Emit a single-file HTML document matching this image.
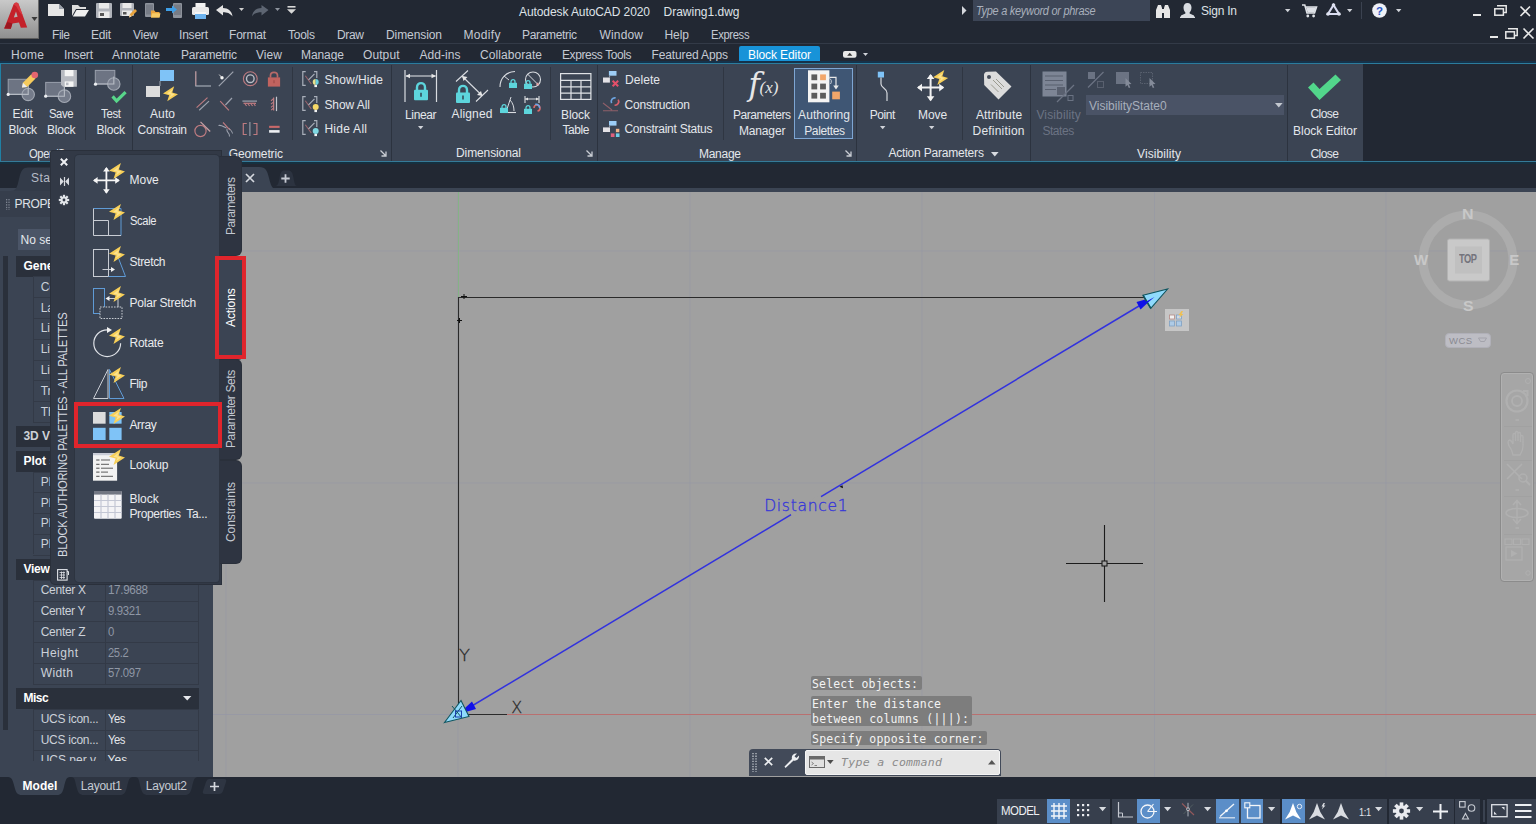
<!DOCTYPE html>
<html lang="en"><head><meta charset="utf-8"><title>Autodesk AutoCAD 2020 - Drawing1.dwg</title>
<style>
html,body{margin:0;padding:0;}
body{width:1536px;height:824px;overflow:hidden;background:#222833;font-family:"Liberation Sans",sans-serif;position:relative;}
#app{position:absolute;left:0;top:0;width:1536px;height:824px;overflow:hidden;}
#app div,#app svg,#app span.t{position:absolute;}
#app div{box-sizing:border-box;}
span.t{white-space:pre;display:block;}
svg{overflow:visible;}
</style></head><body><div id="app">
<div style="left:0px;top:0px;width:39px;height:39px;background:linear-gradient(180deg,#c9c9c9 0%,#a9a9a9 55%,#8f8f8f 100%);border-right:1px solid #6a6a6a;border-bottom:1px solid #5d5d5d;"></div>
<svg style="left:2px;top:1px;" width="30" height="30" viewBox="0 0 30 30">
      <path d="M2.2 27.6 L11.6 3.2 Q13.6 0.2 16.4 2.4 L25.2 26.4 L18.8 26.8 L17 21.4 L10.4 22.6 L8.8 27.8 Z" fill="#c4212a"/>
      <path d="M11.8 16.6 L15.6 15.8 L14 10.4 Z" fill="#b5b5b5"/>
      <path d="M11.6 3.2 Q13.6 0.2 16.4 2.4 L21 15 L17.5 11 L14.2 5.2 Z" fill="#e0424a" opacity=".75"/>
      <path d="M2.2 27.6 L8.8 27.8 L10.4 22.6 L5.4 21 Z" fill="#9a1620"/>
    </svg>
<svg style="left:31px;top:16px;" width="8" height="6" viewBox="0 0 8 6"><path d="M0.5 1 L6.5 1 L3.5 5 Z" fill="#3a3a3a"/></svg>
<svg style="left:48px;top:4px;" width="17" height="13" viewBox="0 0 17 13"><path d="M0 0 H11 L16 5 V12 H0 Z" fill="#e6e6e6"/><path d="M11 0 V5 H16 Z" fill="#9aa0aa"/></svg>
<svg style="left:72px;top:4px;" width="17" height="13" viewBox="0 0 17 13"><path d="M0 1 H6 L8 3 H14 V5 H4 L0 12 Z" fill="#dcdcdc"/><path d="M4.5 6 H17 L13 12.5 H0.8 Z" fill="#f0f0f0"/></svg>
<svg style="left:96px;top:3px;" width="16" height="15" viewBox="0 0 16 15"><rect x="0" y="0" width="16" height="15" rx="1" fill="#b0b3ba"/><rect x="3" y="0" width="10" height="5.5" fill="#e9e9e9"/><rect x="2.5" y="8.5" width="11" height="6.5" fill="#e9e9e9"/><rect x="4" y="10" width="4" height="3" fill="#555"/></svg>
<svg style="left:120px;top:3px;" width="17" height="15" viewBox="0 0 17 15"><rect x="0" y="0" width="14" height="13" rx="1" fill="#b0b3ba"/><rect x="2.5" y="0" width="9" height="5" fill="#e9e9e9"/><rect x="2" y="7.5" width="10" height="5.5" fill="#e9e9e9"/><rect x="3" y="9" width="3.5" height="2.5" fill="#555"/><path d="M9 14.5 L10 11 L15 6 L17 8 L12 13 Z" fill="#e8a33d"/><path d="M9 14.5 L10 11.8 L11.6 13.4 Z" fill="#f3d9b0"/></svg>
<svg style="left:144px;top:3px;" width="17" height="16" viewBox="0 0 17 16"><rect x="1" y="0" width="9" height="14" rx="1" fill="#8d929b"/><rect x="2" y="1.5" width="7" height="10" fill="#777c86"/><path d="M7 7.5 H10.5 L11.5 9 H15.5 V14.5 H7 Z" fill="#e8a33d"/><path d="M8.2 10.2 H16.5 L15.5 14.5 H7 Z" fill="#f7cb66"/></svg>
<svg style="left:166px;top:3px;" width="17" height="16" viewBox="0 0 17 16"><rect x="7" y="0" width="9" height="15" rx="1" fill="#8d929b"/><rect x="8" y="1.5" width="7" height="10.5" fill="#777c86"/><path d="M0 5 H6 V2.5 L11 6.5 L6 10.5 V8 H0 Z" fill="#3fa0e8"/></svg>
<svg style="left:192px;top:3px;" width="17" height="16" viewBox="0 0 17 16"><rect x="3.5" y="0" width="10" height="5" fill="#f2f2f2"/><rect x="0" y="4" width="17" height="8" rx="1.5" fill="#e9e9e9"/><rect x="3" y="9" width="11" height="7" fill="#6db3ee"/><rect x="3" y="9" width="11" height="2" fill="#f6f6f6"/></svg>
<svg style="left:216px;top:5px;" width="17" height="12" viewBox="0 0 17 12"><path d="M0 5 L7 0 V3 C12 3 16 6 16.5 11.5 C14 8 11 7.2 7 7.2 V10.5 Z" fill="#e4e4e4"/></svg>
<svg style="left:239px;top:8px;" width="6" height="4" viewBox="0 0 6 4"><path d="M0 0 H5 L2.5 3 Z" fill="#d0d0d0"/></svg>
<svg style="left:252px;top:5px;" width="17" height="12" viewBox="0 0 17 12"><path d="M16.5 5 L9.5 0 V3 C4.5 3 0.5 6 0 11.5 C2.5 8 5.5 7.2 9.5 7.2 V10.5 Z" fill="#5d6572"/></svg>
<svg style="left:275px;top:8px;" width="6" height="4" viewBox="0 0 6 4"><path d="M0 0 H5 L2.5 3 Z" fill="#8e949e"/></svg>
<svg style="left:287px;top:6px;" width="10" height="8" viewBox="0 0 10 8"><rect x="0.5" y="0" width="8" height="1.6" fill="#d8d8d8"/><path d="M0 3.2 H9 L4.5 7.8 Z" fill="#d8d8d8"/></svg>
<span id="t1" class="t" style="left:519.00px;top:5.00px;line-height:15px;font-size:12px;color:#dfe2e7;letter-spacing:-0.088px;">Autodesk AutoCAD 2020</span>
<span id="t2" class="t" style="left:663.50px;top:5.00px;line-height:15px;font-size:12px;color:#dfe2e7;letter-spacing:-0.004px;">Drawing1.dwg</span>
<svg style="left:962px;top:6px;" width="5" height="9" viewBox="0 0 5 9"><path d="M0 0 L4.5 4.5 L0 9 Z" fill="#d4d7dc"/></svg>
<div style="left:973px;top:0px;width:177px;height:21px;background:#3c4556;"></div>
<span id="t3" class="t" style="left:976.00px;top:3.50px;line-height:15px;font-size:12px;color:#a9b0bc;font-style:italic;transform:scaleX(0.9126);transform-origin:0 50%;letter-spacing:-0.300px;">Type a keyword or phrase</span>
<svg style="left:1155px;top:4px;" width="16" height="14" viewBox="0 0 16 14"><path d="M1 14 V6 L3 1 H6 L7 4 V14 Z M9 14 V4 L10 1 H13 L15 6 V14 Z" fill="#e6e6e6"/><rect x="6.5" y="5" width="3" height="4" fill="#e6e6e6"/></svg>
<svg style="left:1180px;top:3px;" width="15" height="15" viewBox="0 0 15 15"><path d="M7.5 0 C10 0 11.5 2 11.5 4.5 C11.5 7 10.3 9 9.6 9.5 V10.5 L14 12.5 V14.5 H1 V12.5 L5.4 10.5 V9.5 C4.7 9 3.5 7 3.5 4.5 C3.5 2 5 0 7.5 0 Z" fill="#d9dce1"/><rect x="0" y="13.6" width="15" height="1.4" fill="#d9dce1"/></svg>
<span id="t4" class="t" style="left:1201.00px;top:4.00px;line-height:15px;font-size:12px;color:#dfe2e7;letter-spacing:-0.227px;">Sign In</span>
<svg style="left:1285px;top:9px;" width="6" height="4" viewBox="0 0 6 4"><path d="M0 0 H5.4 L2.7 3.2 Z" fill="#d0d3d9"/></svg>
<svg style="left:1302px;top:4px;" width="15" height="14" viewBox="0 0 15 14"><path d="M0 1 H2.8 L5 9 H12.5 L14.5 3 H4" fill="none" stroke="#dfe2e7" stroke-width="1.6"/><path d="M4.2 3.4 H14 L12.3 8.4 H5.6 Z" fill="#dfe2e7"/><circle cx="5.8" cy="12" r="1.4" fill="#dfe2e7"/><circle cx="11.6" cy="12" r="1.4" fill="#dfe2e7"/></svg>
<svg style="left:1326px;top:3px;" width="15" height="13" viewBox="0 0 15 13"><path d="M7.5 2 L13 11 H2 Z" fill="none" stroke="#d9dcf0" stroke-width="2.1"/><circle cx="7.5" cy="2" r="1.8" fill="#dfe2f0"/><circle cx="2" cy="11" r="1.8" fill="#dfe2f0"/><circle cx="13" cy="11" r="1.8" fill="#dfe2f0"/></svg>
<svg style="left:1346.5px;top:9px;" width="6" height="4" viewBox="0 0 6 4"><path d="M0 0 H5.4 L2.7 3.2 Z" fill="#d0d3d9"/></svg>
<div style="left:1361px;top:2px;width:1px;height:17px;background:#3b4250;"></div>
<svg style="left:1372px;top:3px;" width="15" height="15" viewBox="0 0 15 15"><circle cx="7.5" cy="7.5" r="7.3" fill="#eef0f6"/><text x="7.5" y="11.6" font-size="11.5" font-weight="700" text-anchor="middle" fill="#2a56c6" font-family='"Liberation Sans",sans-serif'>?</text></svg>
<svg style="left:1395.5px;top:9px;" width="6" height="4" viewBox="0 0 6 4"><path d="M0 0 H5.4 L2.7 3.2 Z" fill="#d0d3d9"/></svg>
<div style="left:1472.5px;top:14px;width:8px;height:2px;background:#e8e8e8;"></div>
<svg style="left:1494px;top:5px;" width="13" height="11" viewBox="0 0 13 11"><path d="M3 0.8 H12.2 V7.5 H9.5" fill="none" stroke="#e8e8e8" stroke-width="1.5"/><rect x="0.8" y="3.8" width="8.6" height="6.4" fill="none" stroke="#e8e8e8" stroke-width="1.5"/></svg>
<svg style="left:1520px;top:5.5px;" width="11" height="11" viewBox="0 0 11 11"><path d="M0.5 0.5 L10 10 M10 0.5 L0.5 10" stroke="#e8e8e8" stroke-width="1.6" fill="none"/></svg>
<div style="left:1489.5px;top:36px;width:8.5px;height:2px;background:#e8e8e8;"></div>
<svg style="left:1504.5px;top:27.5px;" width="13" height="11" viewBox="0 0 13 11"><path d="M3 0.8 H12.2 V7.5 H9.5" fill="none" stroke="#e8e8e8" stroke-width="1.5"/><rect x="0.8" y="3.8" width="8.6" height="6.4" fill="none" stroke="#e8e8e8" stroke-width="1.5"/></svg>
<svg style="left:1523px;top:27.5px;" width="11" height="11" viewBox="0 0 11 11"><path d="M0.5 0.5 L10.5 10.5 M10.5 0.5 L0.5 10.5" stroke="#e8e8e8" stroke-width="1.6" fill="none"/></svg>
<span id="t5" class="t" style="left:52.00px;top:27.50px;line-height:15px;font-size:12px;color:#c5cad3;letter-spacing:-0.448px;">File</span>
<span id="t6" class="t" style="left:91.00px;top:27.50px;line-height:15px;font-size:12px;color:#c5cad3;letter-spacing:-0.229px;">Edit</span>
<span id="t7" class="t" style="left:133.00px;top:27.50px;line-height:15px;font-size:12px;color:#c5cad3;letter-spacing:-0.266px;">View</span>
<span id="t8" class="t" style="left:179.00px;top:27.50px;line-height:15px;font-size:12px;color:#c5cad3;letter-spacing:-0.203px;">Insert</span>
<span id="t9" class="t" style="left:229.00px;top:27.50px;line-height:15px;font-size:12px;color:#c5cad3;letter-spacing:-0.203px;">Format</span>
<span id="t10" class="t" style="left:288.00px;top:27.50px;line-height:15px;font-size:12px;color:#c5cad3;letter-spacing:-0.254px;">Tools</span>
<span id="t11" class="t" style="left:337.00px;top:27.50px;line-height:15px;font-size:12px;color:#c5cad3;letter-spacing:-0.339px;">Draw</span>
<span id="t12" class="t" style="left:386.00px;top:27.50px;line-height:15px;font-size:12px;color:#c5cad3;letter-spacing:-0.088px;">Dimension</span>
<span id="t13" class="t" style="left:463.50px;top:27.50px;line-height:15px;font-size:12px;color:#c5cad3;letter-spacing:0.331px;">Modify</span>
<span id="t14" class="t" style="left:522.00px;top:27.50px;line-height:15px;font-size:12px;color:#c5cad3;letter-spacing:-0.335px;">Parametric</span>
<span id="t15" class="t" style="left:599.50px;top:27.50px;line-height:15px;font-size:12px;color:#c5cad3;letter-spacing:0.163px;">Window</span>
<span id="t16" class="t" style="left:664.50px;top:27.50px;line-height:15px;font-size:12px;color:#c5cad3;letter-spacing:-0.062px;">Help</span>
<span id="t17" class="t" style="left:711.00px;top:27.50px;line-height:15px;font-size:12px;color:#c5cad3;transform:scaleX(0.9347);transform-origin:0 50%;letter-spacing:-0.361px;">Express</span>
<div style="left:0px;top:43px;width:1536px;height:1px;background:#333a47;"></div>
<span id="t18" class="t" style="left:11.00px;top:48.00px;line-height:15px;font-size:12px;color:#c5cad3;letter-spacing:0.328px;">Home</span>
<span id="t19" class="t" style="left:64.00px;top:48.00px;line-height:15px;font-size:12px;color:#c5cad3;letter-spacing:-0.203px;">Insert</span>
<span id="t20" class="t" style="left:112.00px;top:48.00px;line-height:15px;font-size:12px;color:#c5cad3;letter-spacing:-0.007px;">Annotate</span>
<span id="t21" class="t" style="left:181.00px;top:48.00px;line-height:15px;font-size:12px;color:#c5cad3;letter-spacing:-0.224px;">Parametric</span>
<span id="t22" class="t" style="left:256.00px;top:48.00px;line-height:15px;font-size:12px;color:#c5cad3;letter-spacing:0.068px;">View</span>
<span id="t23" class="t" style="left:301.00px;top:48.00px;line-height:15px;font-size:12px;color:#c5cad3;letter-spacing:-0.075px;">Manage</span>
<span id="t24" class="t" style="left:363.00px;top:48.00px;line-height:15px;font-size:12px;color:#c5cad3;letter-spacing:0.094px;">Output</span>
<span id="t25" class="t" style="left:419.50px;top:48.00px;line-height:15px;font-size:12px;color:#c5cad3;letter-spacing:0.052px;">Add-ins</span>
<span id="t26" class="t" style="left:480.00px;top:48.00px;line-height:15px;font-size:12px;color:#c5cad3;letter-spacing:0.062px;">Collaborate</span>
<span id="t27" class="t" style="left:562.00px;top:48.00px;line-height:15px;font-size:12px;color:#c5cad3;letter-spacing:-0.415px;">Express Tools</span>
<span id="t28" class="t" style="left:651.50px;top:48.00px;line-height:15px;font-size:12px;color:#c5cad3;letter-spacing:-0.130px;">Featured Apps</span>
<div style="left:738.5px;top:46px;width:81.5px;height:18px;background:#1893d8;border-radius:2px 2px 0 0;"></div>
<span id="t29" class="t" style="left:748.00px;top:48.00px;line-height:15px;font-size:12px;color:#ffffff;letter-spacing:-0.094px;">Block Editor</span>
<svg style="left:843px;top:51px;" width="14" height="7" viewBox="0 0 14 7"><rect x="0" y="0" width="13.5" height="6.8" rx="2" fill="#e9e9e9"/><path d="M4.2 4.8 L6.75 1.8 L9.3 4.8 Z" fill="#333"/></svg>
<svg style="left:862.5px;top:53px;" width="6" height="4" viewBox="0 0 6 4"><path d="M0 0 H5 L2.5 3 Z" fill="#d0d3d9"/></svg>
<div style="left:0px;top:64px;width:1362.5px;height:98px;background:#3b4453;"></div>
<div style="left:0px;top:61.4px;width:1536px;height:1.6px;background:#15324a;"></div>
<div style="left:0px;top:63px;width:1536px;height:1px;background:#2b7c9d;"></div>
<div style="left:0px;top:161px;width:1536px;height:1.3px;background:#357a98;"></div>
<div style="left:0px;top:162.3px;width:1536px;height:1.9px;background:#15303f;"></div>
<div style="left:0px;top:64px;width:1.2px;height:97px;background:#2080a4;"></div>
<div style="left:132.0px;top:65px;width:1px;height:96px;background:#2c333f;"></div>
<div style="left:390.8px;top:65px;width:1px;height:96px;background:#2c333f;"></div>
<div style="left:596.5px;top:65px;width:1px;height:96px;background:#2c333f;"></div>
<div style="left:856.1px;top:65px;width:1px;height:96px;background:#2c333f;"></div>
<div style="left:1030.1px;top:65px;width:1px;height:96px;background:#2c333f;"></div>
<div style="left:1287.0px;top:65px;width:1px;height:96px;background:#2c333f;"></div>
<div style="left:85.2px;top:67px;width:1px;height:73px;background:#2f3642;"></div>
<div style="left:292.0px;top:67px;width:1px;height:73px;background:#2f3642;"></div>
<div style="left:549.5px;top:67px;width:1px;height:73px;background:#2f3642;"></div>
<div style="left:722.7px;top:67px;width:1px;height:73px;background:#2f3642;"></div>
<div style="left:962.3px;top:67px;width:1px;height:73px;background:#2f3642;"></div>
<svg style="left:0px;top:60px;" width="48" height="48" viewBox="0 0 48 48">
      <rect x="8.2" y="19.3" width="20.3" height="15.1" fill="#6d7483" stroke="#9aa0ac" stroke-width="1"/>
      <circle cx="28.2" cy="34.4" r="6.2" fill="#7b8290" fill-opacity=".9" stroke="#a2a8b3" stroke-width="1.1"/>
      <path d="M8.2 34.4 H28.2 V27.5" fill="none" stroke="#b5bac3" stroke-width="1.1"/>
      <circle cx="8.2" cy="34.4" r="1.6" fill="#eef0f3"/>
      <path d="M22 27.6 L22.9 22.7 L31.3 14.3 L35.6 18.6 L27.2 27 Z" fill="#f6cb5c"/>
      <path d="M22 27.6 L22.9 22.7 L27.2 27 Z" fill="#eceef2"/>
      <circle cx="34.8" cy="15" r="3.3" fill="#e4656f"/>
    </svg>
<span id="t30" class="t" style="left:12.45px;top:107.30px;line-height:15px;font-size:12px;color:#e4e7eb;letter-spacing:-0.062px;">Edit</span>
<span id="t31" class="t" style="left:8.45px;top:123.30px;line-height:15px;font-size:12px;color:#e4e7eb;letter-spacing:-0.211px;">Block</span>
<svg style="left:40px;top:60px;" width="48" height="48" viewBox="0 0 48 48">
      <rect x="5.7" y="22.4" width="18.7" height="13.8" fill="#6d7483" stroke="#9aa0ac" stroke-width="1"/>
      <circle cx="24.4" cy="36.2" r="6.3" fill="#7b8290" fill-opacity=".9" stroke="#a2a8b3" stroke-width="1.1"/>
      <path d="M5.7 36.2 H24.4 V27" fill="none" stroke="#b5bac3" stroke-width="1.1"/>
      <circle cx="5.7" cy="36.2" r="1.6" fill="#eef0f3"/>
      <path d="M21 9.9 H36.9 V26.8 H23 L21 24.8 Z" fill="#b7bac1"/>
      <rect x="24.7" y="10" width="8.8" height="6.2" fill="#f4f4f4"/>
      <rect x="24.7" y="21.4" width="8.8" height="5.4" fill="#f4f4f4"/>
      <rect x="26" y="22.6" width="2.5" height="2.6" fill="#b7bac1"/>
    </svg>
<span id="t32" class="t" style="left:48.75px;top:107.30px;line-height:15px;font-size:12px;color:#e4e7eb;transform:scaleX(0.9426);transform-origin:0 50%;letter-spacing:-0.456px;">Save</span>
<span id="t33" class="t" style="left:47.05px;top:123.30px;line-height:15px;font-size:12px;color:#e4e7eb;letter-spacing:-0.211px;">Block</span>
<svg style="left:88px;top:60px;" width="48" height="48" viewBox="0 0 48 48">
      <rect x="7.3" y="10.4" width="19.5" height="13.6" fill="#6d7483" stroke="#9aa0ac" stroke-width="1"/>
      <circle cx="25.8" cy="24" r="6.2" fill="#7b8290" fill-opacity=".9" stroke="#a2a8b3" stroke-width="1.1"/>
      <path d="M7.3 24 H25.8 V16.5" fill="none" stroke="#b5bac3" stroke-width="1.1"/>
      <circle cx="7.5" cy="24.2" r="1.6" fill="#eef0f3"/>
      <path d="M24.6 36.4 L28.6 41 L37.6 32.2" fill="none" stroke="#58d68a" stroke-width="3.2"/>
    </svg>
<span id="t34" class="t" style="left:101.00px;top:107.30px;line-height:15px;font-size:12px;color:#e4e7eb;transform:scaleX(0.9563);transform-origin:0 50%;letter-spacing:-0.367px;">Test</span>
<span id="t35" class="t" style="left:96.55px;top:123.30px;line-height:15px;font-size:12px;color:#e4e7eb;letter-spacing:-0.211px;">Block</span>
<span id="t36" class="t" style="left:29.00px;top:147.00px;line-height:15px;font-size:12px;color:#e4e7eb;transform:scaleX(0.9291);transform-origin:0 50%;letter-spacing:-0.375px;">Open/Save</span>
<svg style="left:88px;top:152px;" width="8" height="5" viewBox="0 0 8 5"><path d="M0 0 H7.6 L3.8 4.4 Z" fill="#d8dbe0"/></svg>
<svg style="left:146px;top:70px;" width="32" height="32" viewBox="0 0 32 32">
      <path d="M14 11 V16" stroke="#9aa1ad" stroke-width="1"/>
      <rect x="14" y="0" width="14" height="11" fill="#7fc3f7"/>
      <rect x="0" y="16" width="14" height="11" fill="#dcdcdc"/>
    </svg>
<svg style="left:163px;top:86px;" width="15" height="15.5" viewBox="0 0 15 15"><path d="M11.2 0 L0 7.3 L6.2 9 L4.2 15 L15 8 L9.2 6.2 Z" fill="#f7cf58"/><path d="M9.6 3 L4 7.3 L8 8.3 L6.6 11.6 L11.6 8 L7.8 6.8 Z" fill="#fbe28f"/></svg>
<span id="t37" class="t" style="left:150.00px;top:107.30px;line-height:15px;font-size:12px;color:#e4e7eb;letter-spacing:0.104px;">Auto</span>
<span id="t38" class="t" style="left:137.55px;top:123.30px;line-height:15px;font-size:12px;color:#e4e7eb;letter-spacing:-0.232px;">Constrain</span>
<svg style="left:194.5px;top:71.2px;" width="16" height="16" viewBox="0 0 16 16"><path d="M0.8 0.3 V15" stroke="#c9a3a8" stroke-width="1.2"/><path d="M0.3 15 H16" stroke="#9ca2ae" stroke-width="1.3"/></svg>
<svg style="left:218px;top:71.2px;" width="16" height="16" viewBox="0 0 16 16"><path d="M0.8 15.2 L15.3 0.7" stroke="#9ca2ae" stroke-width="1.2"/><circle cx="4" cy="6.8" r="1.7" fill="#f4f4f4"/><path d="M1.2 3.6 L3.4 6" stroke="#d8d8d8" stroke-width="1"/></svg>
<svg style="left:242px;top:71.2px;" width="16" height="16" viewBox="0 0 16 16"><circle cx="8.3" cy="7.7" r="6.9" fill="none" stroke="#bd7b80" stroke-width="1.1"/><circle cx="8.3" cy="7.7" r="3.8" fill="none" stroke="#b9bec7" stroke-width="1.4"/></svg>
<svg style="left:266px;top:71.2px;" width="16" height="16" viewBox="0 0 16 16"><path d="M4.5 6.8 V4.6 C4.5 0.2 11.5 0.2 11.5 4.6 V6.8" fill="none" stroke="#b96a68" stroke-width="1.7"/><rect x="1.9" y="6.4" width="12.2" height="9.2" fill="#c1635f"/><rect x="7.2" y="9.2" width="1.6" height="3" fill="#a8524f"/></svg>
<svg style="left:194.5px;top:95.7px;" width="16" height="16" viewBox="0 0 16 16"><path d="M1.6 11.6 L12.5 1.6" stroke="#bd7b80" stroke-width="1.2"/><path d="M4.2 14.3 L14 5.1" stroke="#9ca2ae" stroke-width="1.2"/></svg>
<svg style="left:218px;top:95.7px;" width="16" height="16" viewBox="0 0 16 16"><path d="M2.2 5.1 L10.9 14.3" stroke="#bd7b80" stroke-width="1.2"/><path d="M7.4 9 L14 2" stroke="#9ca2ae" stroke-width="1.2"/></svg>
<svg style="left:242px;top:95.7px;" width="16" height="16" viewBox="0 0 16 16"><path d="M0.4 5.1 H15" stroke="#9ca2ae" stroke-width="1.2"/><path d="M1.5 7.3 H14" stroke="#bd7b80" stroke-width="1.3"/><path d="M3 8 l1.6 2 M6 8 l1.6 2 M9 8 l1.6 2 M12 8 l1.4 1.8" stroke="#bd7b80" stroke-width="1.1"/></svg>
<svg style="left:266px;top:95.7px;" width="16" height="16" viewBox="0 0 16 16"><path d="M10.5 0.7 V15.1" stroke="#c3c7cf" stroke-width="1.2"/><path d="M7.6 1.5 V14.5" stroke="#bd7b80" stroke-width="1.3"/><path d="M7 3 l-2 1.8 M7 6.3 l-2 1.8 M7 9.6 l-2 1.8 M7 12.5 l-1.8 1.6" stroke="#bd7b80" stroke-width="1.1"/></svg>
<svg style="left:194.5px;top:120.5px;" width="16" height="16" viewBox="0 0 16 16"><circle cx="5.5" cy="10" r="5.6" fill="none" stroke="#bd7b80" stroke-width="1.2"/><path d="M5.5 0.8 L15.2 10.5" stroke="#c9a3a8" stroke-width="1.2"/></svg>
<svg style="left:218px;top:120.5px;" width="16" height="16" viewBox="0 0 16 16"><path d="M0.5 4.5 C4 3.5 6 6.5 8.5 7" fill="none" stroke="#9ca2ae" stroke-width="1.2"/><path d="M5 1.5 C8 4 9 7 12.5 9" fill="none" stroke="#bd7b80" stroke-width="1.3"/><path d="M9 8 C8 12 12 11 11.5 15.5" fill="none" stroke="#9ca2ae" stroke-width="1.1"/><path d="M11 7.5 C13 9 14 10.5 14.5 12.5" fill="none" stroke="#9ca2ae" stroke-width="1"/></svg>
<svg style="left:242px;top:120.5px;" width="16" height="16" viewBox="0 0 16 16"><path d="M4.8 2.5 H1.3 V13.5 H4.8 M11.4 2.5 H14.9 V13.5 H11.4" fill="none" stroke="#bd7b80" stroke-width="1.2"/><path d="M7.9 1 V15" stroke="#9ca2ae" stroke-width="1.1"/></svg>
<svg style="left:266px;top:120.5px;" width="16" height="16" viewBox="0 0 16 16"><rect x="3.1" y="4.8" width="10.5" height="2.1" fill="#c9696a"/><rect x="3.1" y="9.1" width="10.5" height="2.6" fill="#eef0f3"/></svg>
<span id="t39" class="t" style="left:228.70px;top:146.70px;line-height:15px;font-size:12px;color:#e4e7eb;letter-spacing:-0.132px;">Geometric</span>
<svg style="left:380px;top:150px;" width="7" height="7" viewBox="0 0 7 7"><path d="M0.5 0.5 L5.5 5.5 M6 1.5 V6 H1.5" fill="none" stroke="#c9cdd4" stroke-width="1.3"/></svg>
<svg style="left:301.5px;top:71px;" width="18" height="18" viewBox="0 0 18 18"><path d="M3.7 0.6 H0.8 V14.4 H3.7" fill="none" stroke="#a9afba" stroke-width="1.2"/><path d="M12 0.6 H14.8 V7" fill="none" stroke="#a9afba" stroke-width="1.2"/><path d="M3.3 4.7 L9.3 13" stroke="#9a646c" stroke-width="1.1"/><path d="M12.5 2.8 L6.5 8.9" stroke="#a9afba" stroke-width="1.2"/><path d="M13.7 7.9 A3 3 0 0 0 13.7 13.9 Z" fill="#e8e08c"/><path d="M13.7 7.9 A3 3 0 0 1 13.7 13.9 Z" fill="#69d0e0"/><rect x="12.4" y="13.9" width="2.6" height="2.2" fill="#f2f2f2"/></svg>
<svg style="left:301.5px;top:95.7px;" width="18" height="18" viewBox="0 0 18 18"><path d="M3.7 0.6 H0.8 V14.4 H3.7" fill="none" stroke="#a9afba" stroke-width="1.2"/><path d="M12 0.6 H14.8 V7" fill="none" stroke="#a9afba" stroke-width="1.2"/><path d="M3.3 4.7 L9.3 13" stroke="#9a646c" stroke-width="1.1"/><path d="M12.5 2.8 L6.5 8.9" stroke="#a9afba" stroke-width="1.2"/><circle cx="13.7" cy="10.9" r="3" fill="#f5d867"/><rect x="12.4" y="13.9" width="2.6" height="2.2" fill="#f2f2f2"/></svg>
<svg style="left:301.5px;top:120.30000000000001px;" width="18" height="18" viewBox="0 0 18 18"><path d="M3.7 0.6 H0.8 V14.4 H3.7" fill="none" stroke="#a9afba" stroke-width="1.2"/><path d="M12 0.6 H14.8 V7" fill="none" stroke="#a9afba" stroke-width="1.2"/><path d="M3.3 4.7 L9.3 13" stroke="#9a646c" stroke-width="1.1"/><path d="M12.5 2.8 L6.5 8.9" stroke="#a9afba" stroke-width="1.2"/><circle cx="13.7" cy="10.9" r="3" fill="#7fd8e2"/><rect x="12.4" y="13.9" width="2.6" height="2.2" fill="#f2f2f2"/></svg>
<span id="t40" class="t" style="left:324.40px;top:73.00px;line-height:15px;font-size:12px;color:#e4e7eb;letter-spacing:0.071px;">Show/Hide</span>
<span id="t41" class="t" style="left:324.40px;top:97.70px;line-height:15px;font-size:12px;color:#e4e7eb;letter-spacing:-0.062px;">Show All</span>
<span id="t42" class="t" style="left:324.40px;top:122.30px;line-height:15px;font-size:12px;color:#e4e7eb;letter-spacing:0.273px;">Hide All</span>
<svg style="left:404px;top:70px;" width="34" height="33" viewBox="0 0 34 33"><path d="M1 0 V32 M32.5 0 V32" stroke="#d9dce1" stroke-width="1.2"/><path d="M2 6 H31.5" stroke="#d9dce1" stroke-width="1.1"/><path d="M1.5 6 L6 3.8 V8.2 Z M32 6 L27.5 3.8 V8.2 Z" fill="#e6e6e6"/></svg>
<svg style="left:413.5px;top:82px;" width="14" height="18.5" viewBox="0 0 14 18"><path d="M3 8 V5 C3 -0.5 11 -0.5 11 5 V8" fill="none" stroke="#5dd5dc" stroke-width="2.4"/><rect x="0" y="7.5" width="14" height="10.5" rx="1" fill="#5dd5dc"/><rect x="6.3" y="10.5" width="1.4" height="4" fill="#2f3744"/></svg>
<span id="t43" class="t" style="left:405.05px;top:108.00px;line-height:15px;font-size:12px;color:#e4e7eb;letter-spacing:-0.372px;">Linear</span>
<svg style="left:418px;top:125.5px;" width="6" height="4" viewBox="0 0 6 4"><path d="M0 0 H5.4 L2.7 3.2 Z" fill="#d0d3d9"/></svg>
<svg style="left:451px;top:69px;" width="40" height="36" viewBox="0 0 40 36"><path d="M5 12.5 L17 1.5 M25 32.5 L37 21" stroke="#d9dce1" stroke-width="1.1"/><path d="M11.5 7.5 L31 26.5" stroke="#d9dce1" stroke-width="1.1"/><path d="M11 7 L16.5 8 L12.5 12 Z M31.5 27 L26 26 L30 22 Z" fill="#e6e6e6"/></svg>
<svg style="left:455.8px;top:84.5px;" width="14" height="18" viewBox="0 0 14 18"><path d="M3 8 V5 C3 -0.5 11 -0.5 11 5 V8" fill="none" stroke="#5dd5dc" stroke-width="2.4"/><rect x="0" y="7.5" width="14" height="10.5" rx="1" fill="#5dd5dc"/><rect x="6.3" y="10.5" width="1.4" height="4" fill="#2f3744"/></svg>
<span id="t44" class="t" style="left:451.60px;top:107.30px;line-height:15px;font-size:12px;color:#e4e7eb;letter-spacing:0.128px;">Aligned</span>
<svg style="left:499px;top:71px;" width="18" height="18" viewBox="0 0 18 18"><path d="M1 16 C1 7 7 1 16 0.5" fill="none" stroke="#d9dce1" stroke-width="1.1"/><path d="M5 5 L10 9" stroke="#d9dce1" stroke-width="1"/></svg>
<svg style="left:508.5px;top:79px;" width="8" height="9" viewBox="0 0 8 9"><path d="M2 4 V2.8 C2 0 6 0 6 2.8 V4" fill="none" stroke="#5dd5dc" stroke-width="1.3"/><rect x="0" y="3.8" width="8" height="5.2" fill="#5dd5dc"/></svg>
<svg style="left:523px;top:71px;" width="18" height="18" viewBox="0 0 18 18"><circle cx="10" cy="8.5" r="7.5" fill="none" stroke="#d9dce1" stroke-width="1.1"/><path d="M4.5 3 L15.5 14" stroke="#d9dce1" stroke-width="1"/><path d="M16 14.5 L12.8 13.6 L15.1 11.3 Z" fill="#e8a0a0"/></svg>
<svg style="left:523.5px;top:79.5px;" width="8" height="9" viewBox="0 0 8 9"><path d="M2 4 V2.8 C2 0 6 0 6 2.8 V4" fill="none" stroke="#5dd5dc" stroke-width="1.3"/><rect x="0" y="3.8" width="8" height="5.2" fill="#5dd5dc"/></svg>
<svg style="left:499px;top:96px;" width="18" height="18" viewBox="0 0 18 18"><path d="M2 16.5 H17" stroke="#d9dce1" stroke-width="1.1"/><path d="M7 16 L12 1" stroke="#d9dce1" stroke-width="1"/><path d="M11 4 C14 7 15 11 15 15" fill="none" stroke="#d9dce1" stroke-width="1"/></svg>
<svg style="left:499.5px;top:104px;" width="8" height="9" viewBox="0 0 8 9"><path d="M2 4 V2.8 C2 0 6 0 6 2.8 V4" fill="none" stroke="#5dd5dc" stroke-width="1.3"/><rect x="0" y="3.8" width="8" height="5.2" fill="#5dd5dc"/></svg>
<svg style="left:523px;top:96px;" width="18" height="18" viewBox="0 0 18 18"><path d="M2 0 V7 M16 0 V7 M2 3 H16" stroke="#d9dce1" stroke-width="1.1" fill="none"/><path d="M2.3 3 L5 1.6 V4.4 Z M15.7 3 L13 1.6 V4.4 Z" fill="#e6e6e6"/><path d="M11 12 A3 3 0 1 1 14.5 15" fill="none" stroke="#d86a6a" stroke-width="1.6"/><path d="M12.2 8.5 A3.2 3.2 0 0 1 16.5 12" fill="none" stroke="#6da6e8" stroke-width="1.6"/></svg>
<svg style="left:523.5px;top:105px;" width="8" height="9" viewBox="0 0 8 9"><path d="M2 4 V2.8 C2 0 6 0 6 2.8 V4" fill="none" stroke="#5dd5dc" stroke-width="1.3"/><rect x="0" y="3.8" width="8" height="5.2" fill="#5dd5dc"/></svg>
<svg style="left:559.5px;top:72.5px;" width="32" height="27" viewBox="0 0 32 27"><rect x="0.6" y="0.6" width="30.3" height="25.8" fill="none" stroke="#dfe2e6" stroke-width="1.2"/><path d="M0.6 7.4 H31 M0.6 13.8 H31 M0.6 20.2 H31 M11 7.4 V26.4 M21 7.4 V26.4" stroke="#dfe2e6" stroke-width="1.2" fill="none"/></svg>
<span id="t45" class="t" style="left:561.00px;top:107.70px;line-height:15px;font-size:12px;color:#e4e7eb;letter-spacing:-0.086px;">Block</span>
<span id="t46" class="t" style="left:562.60px;top:123.30px;line-height:15px;font-size:12px;color:#e4e7eb;letter-spacing:-0.472px;">Table</span>
<span id="t47" class="t" style="left:456.00px;top:146.40px;line-height:15px;font-size:12px;color:#e4e7eb;letter-spacing:-0.103px;">Dimensional</span>
<svg style="left:586px;top:150px;" width="7" height="7" viewBox="0 0 7 7"><path d="M0.5 0.5 L5.5 5.5 M6 1.5 V6 H1.5" fill="none" stroke="#c9cdd4" stroke-width="1.3"/></svg>
<svg style="left:600px;top:68px;" width="24" height="24" viewBox="0 0 24 24"><rect x="8.9" y="3" width="7.6" height="4.7" fill="#9ccdf6"/><rect x="3" y="9.5" width="6.9" height="5.1" fill="#e4e2e6"/><path d="M9.6 7.7 V9.5" stroke="#9aa1ad"/><path d="M12.6 12.7 L18.2 18.3 M18.2 12.7 L12.6 18.3" stroke="#e4506a" stroke-width="2"/></svg>
<span id="t48" class="t" style="left:625.00px;top:73.00px;line-height:15px;font-size:12px;color:#e4e7eb;letter-spacing:0.062px;">Delete</span>
<svg style="left:600px;top:92px;" width="24" height="24" viewBox="0 0 24 24"><path d="M3 11 L12 18 M3 18.8 H18" stroke="#8f5f69" stroke-width="1.1" fill="none"/><path d="M11.6 11.2 A3.7 3.7 0 0 1 15.6 5.9" fill="none" stroke="#6ea4e0" stroke-width="1.7"/><path d="M18.2 7.6 A3.7 3.7 0 0 1 14.6 13.2" fill="none" stroke="#d8606c" stroke-width="1.7"/></svg>
<span id="t49" class="t" style="left:624.40px;top:97.70px;line-height:15px;font-size:12px;color:#e4e7eb;letter-spacing:-0.161px;">Construction</span>
<svg style="left:600px;top:117px;" width="24" height="24" viewBox="0 0 24 24"><rect x="9" y="4" width="7.5" height="4.6" fill="#9ccdf6"/><rect x="3" y="10.4" width="7" height="4.6" fill="#e4e2e6"/><path d="M9.6 8.6 V10.4" stroke="#9aa1ad"/><rect x="15.9" y="11.8" width="3.4" height="3.4" fill="#f0b48a"/><rect x="10.8" y="16.4" width="3.7" height="3.6" fill="#e0607c"/><rect x="15.9" y="16.4" width="3.6" height="3.6" fill="#6ecfe8"/></svg>
<span id="t50" class="t" style="left:624.40px;top:122.30px;line-height:15px;font-size:12px;color:#e4e7eb;letter-spacing:-0.253px;">Constraint Status</span>
<svg style="left:745px;top:68px;" width="36" height="36" viewBox="0 0 36 36"><text x="3.5" y="27" font-size="31" font-style="italic" fill="#e6e6e6" font-family="DejaVu Serif, serif">f</text><text x="14.5" y="24.6" font-size="17" font-style="italic" fill="#e6e6e6" font-family="Liberation Serif, serif">(x)</text></svg>
<span id="t51" class="t" style="left:733.00px;top:108.00px;line-height:15px;font-size:12px;color:#e4e7eb;letter-spacing:-0.448px;">Parameters</span>
<span id="t52" class="t" style="left:738.95px;top:123.80px;line-height:15px;font-size:12px;color:#e4e7eb;letter-spacing:-0.146px;">Manager</span>
<div style="left:794px;top:68px;width:59px;height:71px;background:#3f5674;border:1px solid #7ea6d3;"></div>
<svg style="left:808px;top:70px;" width="33" height="33" viewBox="0 0 33 33">
      <rect x="0" y="0.3" width="21.4" height="32" fill="#f4f4f4"/>
      <rect x="3.4" y="4.4" width="5.8" height="5.8" fill="#5d5d5d"/><rect x="12.1" y="4.4" width="5.8" height="5.8" fill="#f2a66a"/>
      <rect x="3.4" y="13.6" width="5.8" height="5.8" fill="#5d5d5d"/><rect x="12.1" y="13.6" width="5.8" height="5.8" fill="#5d5d5d"/>
      <rect x="3.4" y="22.8" width="5.8" height="5.8" fill="#5d5d5d"/><rect x="12.1" y="22.8" width="5.8" height="5.8" fill="#5d5d5d"/>
      <path d="M21.4 7.3 H28 V16" fill="none" stroke="#e8e8e8" stroke-width="1.2"/><path d="M25.2 15.4 H30.8 L28 19.4 Z" fill="#e8e8e8"/>
      <path d="M21.4 8.5 C23.5 9 24 12 22.5 14" fill="none" stroke="#cfd3da" stroke-width="1"/>
      <rect x="24.2" y="21.6" width="7.7" height="7.7" fill="#f2a66a"/>
    </svg>
<span id="t53" class="t" style="left:798.10px;top:107.70px;line-height:15px;font-size:12px;color:#e4e7eb;letter-spacing:0.053px;">Authoring</span>
<span id="t54" class="t" style="left:804.25px;top:123.50px;line-height:15px;font-size:12px;color:#e4e7eb;letter-spacing:-0.380px;">Palettes</span>
<span id="t55" class="t" style="left:698.90px;top:146.70px;line-height:15px;font-size:12px;color:#e4e7eb;letter-spacing:-0.255px;">Manage</span>
<svg style="left:845px;top:150px;" width="7" height="7" viewBox="0 0 7 7"><path d="M0.5 0.5 L5.5 5.5 M6 1.5 V6 H1.5" fill="none" stroke="#c9cdd4" stroke-width="1.3"/></svg>
<svg style="left:876px;top:71px;" width="14" height="31" viewBox="0 0 14 31"><rect x="1.8" y="0.7" width="6.2" height="5.8" fill="#7fc3f7"/><path d="M5 6.5 V13 C5 17 11 17 11 22 V30" fill="none" stroke="#d6d9de" stroke-width="1.2"/></svg>
<span id="t56" class="t" style="left:869.75px;top:108.00px;line-height:15px;font-size:12px;color:#e4e7eb;letter-spacing:-0.465px;">Point</span>
<svg style="left:879.7px;top:125.5px;" width="6" height="4" viewBox="0 0 6 4"><path d="M0 0 H5.4 L2.7 3.2 Z" fill="#d0d3d9"/></svg>
<svg style="left:916.8px;top:74.4px;" width="27.2" height="27.2" viewBox="0 0 27.2 27.2"><path d="M13.6 1 V26.2 M1 13.6 H26.2" stroke="#f2f2f2" stroke-width="2"/><path d="M13.6 0 L9.8 5 H17.4 Z M13.6 27.2 L9.8 22.2 H17.4 Z M0 13.6 L5 9.8 V17.4 Z M27.2 13.6 L22.2 9.8 V17.4 Z" fill="#f2f2f2"/></svg>
<svg style="left:932.8px;top:70px;" width="15.2" height="15" viewBox="0 0 15 15"><path d="M11.2 0 L0 7.3 L6.2 9 L4.2 15 L15 8 L9.2 6.2 Z" fill="#f7cf58"/><path d="M9.6 3 L4 7.3 L8 8.3 L6.6 11.6 L11.6 8 L7.8 6.8 Z" fill="#fbe28f"/></svg>
<span id="t57" class="t" style="left:918.00px;top:108.00px;line-height:15px;font-size:12px;color:#e4e7eb;letter-spacing:-0.048px;">Move</span>
<svg style="left:929px;top:125.5px;" width="6" height="4" viewBox="0 0 6 4"><path d="M0 0 H5.4 L2.7 3.2 Z" fill="#d0d3d9"/></svg>
<svg style="left:983px;top:71px;" width="29" height="29" viewBox="0 0 29 29"><path d="M1 5 Q0.5 1 4.5 0.8 L13 0.5 L28.5 15.5 L15.5 28.5 L1.2 14 Z" fill="#dcdcdc"/><circle cx="6" cy="6" r="2" fill="#444b58"/><path d="M10 9 L19 18 M8 13.5 L15.5 21 M13 8 L21 16" stroke="#9b9b90" stroke-width="1"/></svg>
<span id="t58" class="t" style="left:975.90px;top:107.70px;line-height:15px;font-size:12px;color:#e4e7eb;letter-spacing:0.187px;">Attribute</span>
<span id="t59" class="t" style="left:972.50px;top:123.50px;line-height:15px;font-size:12px;color:#e4e7eb;letter-spacing:0.219px;">Definition</span>
<span id="t60" class="t" style="left:888.40px;top:146.40px;line-height:15px;font-size:12px;color:#e4e7eb;letter-spacing:-0.201px;">Action Parameters</span>
<svg style="left:991px;top:151.5px;" width="8" height="5" viewBox="0 0 8 5"><path d="M0 0 H7.6 L3.8 4.4 Z" fill="#d8dbe0"/></svg>
<svg style="left:1042px;top:70.5px;" width="34" height="32" viewBox="0 0 34 32"><rect x="0.5" y="0.5" width="24" height="25" fill="#7d8595"/><path d="M3 5 H21 M3 9.5 H21 M3 14 H21 M3 18.5 H14" stroke="#59606f" stroke-width="1.2"/><rect x="15" y="16" width="8" height="8" fill="#59606f"/><path d="M15 31 L32 14" stroke="#6b7383" stroke-width="1.2"/><rect x="26" y="24.5" width="5" height="5" fill="none" stroke="#6b7383" stroke-width="1"/></svg>
<span id="t61" class="t" style="left:1036.40px;top:108.30px;line-height:15px;font-size:12px;color:#6b7383;letter-spacing:0.142px;">Visibility</span>
<span id="t62" class="t" style="left:1042.40px;top:123.80px;line-height:15px;font-size:12px;color:#6b7383;letter-spacing:-0.446px;">States</span>
<svg style="left:1088px;top:72px;" width="16" height="16" viewBox="0 0 16 16"><rect x="0" y="0" width="7" height="7" fill="#6b7383"/><path d="M0 15.5 L15.5 0" stroke="#6b7383" stroke-width="1.2"/><rect x="9.5" y="9.5" width="6" height="6" fill="none" stroke="#59606f" stroke-width="1"/></svg>
<svg style="left:1116px;top:72px;" width="16" height="16" viewBox="0 0 16 16"><rect x="0" y="0" width="13" height="12" fill="#6b7383"/><path d="M9.5 6 L15.5 12 L12.8 12.3 L14.3 15.5 L12.8 16 L11.5 13 L9.5 14.8 Z" fill="#848b99"/></svg>
<svg style="left:1140px;top:72px;" width="16" height="16" viewBox="0 0 16 16"><rect x="0.5" y="0.5" width="12" height="11" fill="none" stroke="#59606f" stroke-width="1" stroke-dasharray="1.5 1"/><path d="M9.5 6 L15.5 12 L12.8 12.3 L14.3 15.5 L12.8 16 L11.5 13 L9.5 14.8 Z" fill="#848b99"/></svg>
<div style="left:1086px;top:95px;width:197.5px;height:19.7px;background:#4a5366;"></div>
<span id="t63" class="t" style="left:1089.00px;top:98.50px;line-height:15px;font-size:12px;color:#a7afbc;letter-spacing:-0.009px;">VisibilityState0</span>
<svg style="left:1275px;top:103px;" width="8" height="5" viewBox="0 0 8 5"><path d="M0 0 H7.6 L3.8 4.4 Z" fill="#c3c8d0"/></svg>
<span id="t64" class="t" style="left:1137.00px;top:146.50px;line-height:15px;font-size:12px;color:#e4e7eb;letter-spacing:0.097px;">Visibility</span>
<svg style="left:1308px;top:73.5px;" width="34" height="26" viewBox="0 0 34 26"><path d="M0 13.5 L5.5 8.5 L11.5 15 L27.5 0.5 L33 6 L11.5 26 Z" fill="#52d68b"/></svg>
<span id="t65" class="t" style="left:1310.40px;top:107.30px;line-height:15px;font-size:12px;color:#e4e7eb;letter-spacing:-0.522px;">Close</span>
<span id="t66" class="t" style="left:1293.00px;top:123.50px;line-height:15px;font-size:12px;color:#e4e7eb;letter-spacing:-0.003px;">Block Editor</span>
<span id="t67" class="t" style="left:1310.40px;top:146.70px;line-height:15px;font-size:12px;color:#e4e7eb;letter-spacing:-0.522px;">Close</span>
<div style="left:0px;top:164px;width:1536px;height:24px;background:#222833;"></div>
<div style="left:0px;top:188px;width:1536px;height:4px;background:#3b4453;"></div>
<svg style="left:10px;top:167px;" width="120" height="24" viewBox="0 0 120 24"><path d="M0 24 C6 24 7 21 9 12 C11 3 13 0.5 18 0.5 H110 V24 Z" fill="#333b49"/></svg>
<span id="t68" class="t" style="left:31.00px;top:170.50px;line-height:15px;font-size:12px;color:#b6bcc7;letter-spacing:0.414px;">Start</span>
<svg style="left:60px;top:167px;" width="212" height="24" viewBox="0 0 212 24"><path d="M0 24 V0 H199 C206 0 207 3.5 209 11 C211 19 212 22 217 22 V24 Z" fill="#3b4453"/></svg>
<svg style="left:245px;top:172.5px;" width="10" height="10" viewBox="0 0 10 10"><path d="M1 1 L9 9 M9 1 L1 9" stroke="#d5d8de" stroke-width="1.7"/></svg>
<svg style="left:273px;top:170px;" width="24" height="16" viewBox="0 0 24 16"><path d="M2 16 C5 16 5.5 13 6.5 8 C7.5 2.5 8.5 0.5 11 0.5 H15 C18.5 0.5 19.5 2.5 20.5 8 C21.5 13 22 16 24 16 Z" fill="#2c3340"/></svg>
<svg style="left:280.7px;top:173.7px;" width="9" height="9" viewBox="0 0 9 9"><path d="M4.5 0.3 V8.7 M0.3 4.5 H8.7" stroke="#c5c9d2" stroke-width="1.8"/></svg>
<div style="left:212.5px;top:192px;width:1323.5px;height:585px;background:#a0a0a0;"></div>
<svg style="left:0;top:0" width="1536" height="824" viewBox="0 0 1536 824"><path d="M226 192 V777" stroke="#9597a6" stroke-width="1" opacity=".55"/><path d="M458 192 V777" stroke="#9597a6" stroke-width="1" opacity=".55"/><path d="M690 192 V777" stroke="#9597a6" stroke-width="1" opacity=".55"/><path d="M922 192 V777" stroke="#9597a6" stroke-width="1" opacity=".55"/><path d="M1154.5 192 V777" stroke="#9597a6" stroke-width="1" opacity=".55"/><path d="M1386 192 V777" stroke="#9597a6" stroke-width="1" opacity=".55"/><path d="M213 251 H1536" stroke="#9597a6" stroke-width="1" opacity=".55"/><path d="M213 483 H1536" stroke="#9597a6" stroke-width="1" opacity=".55"/><path d="M213 714.5 H458" stroke="#9597a6" stroke-width="1" opacity=".7"/><path d="M458 714.5 H1536" stroke="#b97070" stroke-width="1"/><path d="M458.5 192 V297" stroke="#86b386" stroke-width="1"/><path d="M458.5 714 V297.5 H1154" fill="none" stroke="#2a2a2a" stroke-width="1.1"/><path d="M458 714.5 H507" stroke="#2a2a2a" stroke-width="1.1"/><path d="M461 296.5 h6 M464 294 v5 M457 320.5 h5 M459.5 318 v5" stroke="#111" stroke-width="1"/><path d="M458.5 714 L1154 297" stroke="#3232de" stroke-width="1.5"/><path d="M791 514.6 L821 496.6" stroke="#a0a0a0" stroke-width="5"/><path d="M1154 297 L1136.5 302 L1140.5 309.5 Z" fill="#1010e8"/><path d="M458.5 714 L476 709 L472 701.5 Z" fill="#1010e8"/><path d="M1143 295.2 L1167.6 289 L1150.8 308.3 Z" fill="#8fdafc" stroke="#0f5560" stroke-width="1.1"/><path d="M1143 295.2 L1150.8 308.3" stroke="#0f5560" stroke-width="1.6"/><path d="M1139 305.5 L1154.5 297 L1148 302.5 Z" fill="#1010e8"/><path d="M444.5 722.5 L469 716.5 L461 700.5 Z" fill="#8fdafc" stroke="#0f5560" stroke-width="1.1"/><path d="M452 706 l10 12 M462 706 l-9 12" stroke="#0f5560" stroke-width="1"/><rect x="455.5" y="711" width="6" height="6" fill="none" stroke="#1b3fae" stroke-width="1"/><path d="M839.5 486.8 l3 -1.5 l0.5 3 Z" fill="#111"/><path d="M1066 563.5 H1143 M1104.5 525 V602" stroke="#1c1c1c" stroke-width="1.1"/><rect x="1102" y="561" width="5" height="5" fill="#a0a0a0" stroke="#1c1c1c" stroke-width="1.1"/></svg>
<span id="t69" class="t" style="left:459.40px;top:646.00px;line-height:20px;font-size:16px;color:#2a2a2a;font-weight:200;font-family:'DejaVu Sans', sans-serif;transform:scaleX(1.1207);transform-origin:0 50%;letter-spacing:0.391px;-webkit-text-stroke:0.3px #2a2a2a;">Y</span>
<span id="t70" class="t" style="left:511.30px;top:698.30px;line-height:20px;font-size:16px;color:#2a2a2a;font-weight:200;font-family:'DejaVu Sans', sans-serif;letter-spacing:0.831px;-webkit-text-stroke:0.3px #2a2a2a;">X</span>
<span id="t71" class="t" style="left:764.20px;top:497.00px;line-height:19px;font-size:15.5px;color:#3838d8;font-weight:200;font-family:'DejaVu Sans', sans-serif;letter-spacing:0.720px;-webkit-text-stroke:0.35px #3838d8;">Distance1</span>
<div style="left:1165px;top:308.5px;width:23.5px;height:22.5px;background:#c6c6c6;"></div>
<svg style="left:1169px;top:311px;" width="17" height="17" viewBox="0 0 17 17"><rect x="0.5" y="4" width="5" height="4" fill="#f2f2f2" stroke="#b58a86" stroke-width=".8"/><rect x="7.5" y="4" width="5" height="4" fill="#cfd9e4" stroke="#7fa0c2" stroke-width=".8"/><rect x="0.5" y="10" width="5" height="5" fill="#aecbe6" stroke="#7fa0c2" stroke-width=".8"/><rect x="7.5" y="10" width="5" height="5" fill="#aecbe6" stroke="#7fa0c2" stroke-width=".8"/><path d="M12.5 0 L9.5 4 H11.5 L10 7 L14.5 3 H12.5 L14 0 Z" fill="#f0c050"/></svg>
<svg style="left:1408px;top:200px;" width="120" height="120" viewBox="0 0 120 120">
      <circle cx="60" cy="60" r="45" fill="none" stroke="#acacac" stroke-width="9"/>
      <rect x="39.5" y="39" width="42" height="42" rx="2" fill="#c9c9c9" stroke="#b3b3b3" stroke-width="1"/>
      <rect x="47" y="46.5" width="27" height="27" fill="#c0c0c0"/>
    </svg>
<span id="t72" class="t" style="left:1462.00px;top:203.60px;line-height:19px;font-size:15px;color:#c8c8c8;font-weight:700;transform:scaleX(1.0641);transform-origin:0 50%;letter-spacing:0.434px;">N</span>
<span id="t73" class="t" style="left:1462.50px;top:296.00px;line-height:19px;font-size:15px;color:#c8c8c8;font-weight:700;transform:scaleX(1.0560);transform-origin:0 50%;letter-spacing:0.401px;">S</span>
<span id="t74" class="t" style="left:1414.00px;top:250.00px;line-height:19px;font-size:15px;color:#c8c8c8;font-weight:700;letter-spacing:0.828px;">W</span>
<span id="t75" class="t" style="left:1509.25px;top:250.00px;line-height:19px;font-size:15px;color:#c8c8c8;font-weight:700;letter-spacing:0.484px;">E</span>
<span id="t76" class="t" style="left:1459.30px;top:252.30px;line-height:15px;font-size:12px;color:#74747c;font-weight:700;transform:scaleX(0.7748);transform-origin:0 50%;letter-spacing:-0.611px;">TOP</span>
<div style="left:1445px;top:332.5px;width:45.5px;height:15.5px;background:#bdbdc4;border-radius:4px;border:1px solid #b0b0b8;"></div>
<span id="t77" class="t" style="left:1449.00px;top:334.80px;line-height:12px;font-size:9.5px;color:#8a8a92;letter-spacing:0.414px;">WCS</span>
<svg style="left:1477.5px;top:337px;" width="9" height="6" viewBox="0 0 9 6"><path d="M0.5 1 H8.5 L6.5 4.5 H2.5 Z" fill="none" stroke="#a3a3ab" stroke-width="1"/></svg>
<div style="left:1500px;top:371.5px;width:34px;height:210px;background:#a6a6a6;border:1.2px solid #8b8b8b;border-radius:4px;box-shadow:inset 0 0 0 1px #b1b1b1;"></div>
<svg style="left:1503px;top:375px;" width="30" height="205" viewBox="0 0 30 205">
      <circle cx="25" cy="6" r="2.5" fill="none" stroke="#b0b0b0" stroke-width="1"/>
      <circle cx="14" cy="26" r="10.5" fill="none" stroke="#b0b0b0" stroke-width="2.2"/>
      <circle cx="14" cy="26" r="5" fill="none" stroke="#b0b0b0" stroke-width="1.8"/>
      <path d="M20 16 H24.5 V21" fill="none" stroke="#b0b0b0" stroke-width="2"/>
      <path d="M12.5 45 H16 " stroke="#b0b0b0" stroke-width="1.5"/>
      <path d="M1 51.5 H29" stroke="#a1a1a1" stroke-width="1"/>
      <path d="M8 74 C5 70 4 66 6.5 65 C8 65 9 67 10 69 V60 C10 58 12.5 58 12.5 60 V66 V58 C12.5 56 15 56 15 58 V66 V59 C15 57 17.5 57 17.5 59 V67 V62 C17.5 60 20 60 20 62 V71 C20 75 18 78 17 80 H10 C9.5 78 9 76 8 74 Z" fill="none" stroke="#b0b0b0" stroke-width="1.3"/>
      <path d="M1 85.5 H29" stroke="#a1a1a1" stroke-width="1"/>
      <path d="M4 89 L19 104 M19 89 L4 104" stroke="#b0b0b0" stroke-width="1.6"/>
      <circle cx="20" cy="103" r="4" fill="none" stroke="#b0b0b0" stroke-width="1.5"/><path d="M23 106 L27 110" stroke="#b0b0b0" stroke-width="1.8"/>
      <path d="M12.5 115 H16" stroke="#b0b0b0" stroke-width="1.5"/>
      <path d="M1 121.5 H29" stroke="#a1a1a1" stroke-width="1"/>
      <path d="M14 126 V148 M10 130 L14 125.5 L18 130 M10 144 L14 148.5 L18 144" fill="none" stroke="#b0b0b0" stroke-width="1.5"/>
      <ellipse cx="14" cy="138" rx="11" ry="4.5" fill="none" stroke="#b0b0b0" stroke-width="1.5"/>
      <path d="M12.5 153 H16" stroke="#b0b0b0" stroke-width="1.5"/>
      <path d="M1 159.5 H29" stroke="#a1a1a1" stroke-width="1"/>
      <rect x="2" y="164" width="7" height="5.5" fill="none" stroke="#b0b0b0" stroke-width="1.1"/><rect x="10.5" y="164" width="7" height="5.5" fill="none" stroke="#b0b0b0" stroke-width="1.1"/><rect x="19" y="164" width="7" height="5.5" fill="none" stroke="#b0b0b0" stroke-width="1.1"/>
      <rect x="3" y="172" width="16" height="13" fill="none" stroke="#b0b0b0" stroke-width="1.3"/><path d="M8 175 L14.5 178.5 L8 182 Z" fill="#b0b0b0"/>
      <circle cx="25" cy="198" r="2.2" fill="none" stroke="#b0b0b0" stroke-width="1"/>
    </svg>
<div style="left:810.5px;top:675.5px;width:111px;height:14.5px;background:#7d7d7d;border-radius:2px;"></div>
<span id="t78" class="t" style="left:812.00px;top:676.50px;line-height:14px;font-size:11.5px;color:#f3f3f3;font-family:'DejaVu Sans Mono', 'Liberation Mono', monospace;letter-spacing:0.153px;">Select objects:</span>
<div style="left:810.5px;top:695.5px;width:161.5px;height:30px;background:#7d7d7d;border-radius:2px;"></div>
<span id="t79" class="t" style="left:812.00px;top:697.00px;line-height:14px;font-size:11.5px;color:#f3f3f3;font-family:'DejaVu Sans Mono', 'Liberation Mono', monospace;letter-spacing:0.257px;">Enter the distance</span>
<span id="t80" class="t" style="left:812.00px;top:712.00px;line-height:14px;font-size:11.5px;color:#f3f3f3;font-family:'DejaVu Sans Mono', 'Liberation Mono', monospace;letter-spacing:0.222px;">between columns (|||):</span>
<div style="left:810.5px;top:730.5px;width:176px;height:14.5px;background:#7d7d7d;border-radius:2px;"></div>
<span id="t81" class="t" style="left:812.00px;top:732.00px;line-height:14px;font-size:11.5px;color:#f3f3f3;font-family:'DejaVu Sans Mono', 'Liberation Mono', monospace;letter-spacing:0.232px;">Specify opposite corner:</span>
<div style="left:749px;top:749px;width:252px;height:27px;background:#424a59;border-radius:4px 4px 0 0;"></div>
<svg style="left:752px;top:753px;" width="6" height="19" viewBox="0 0 6 19"><path d="M1 0 V19 M4 0 V19" stroke="#d9dce1" stroke-width="1.1" stroke-dasharray="1.3 1.3"/></svg>
<svg style="left:763.5px;top:756.5px;" width="9" height="9" viewBox="0 0 9 9"><path d="M0.8 0.8 L8.2 8.2 M8.2 0.8 L0.8 8.2" stroke="#eceef1" stroke-width="1.7"/></svg>
<svg style="left:784px;top:753px;" width="16" height="16" viewBox="0 0 16 16"><path d="M1.5 15 L0.5 13.5 L8 6 C7 3 9.5 0 13 0.6 L10.5 3.2 L12.3 5 L15 2.5 C15.6 6 12.5 8.5 9.6 7.6 Z" fill="#eceef1"/></svg>
<div style="left:805px;top:749.5px;width:195px;height:25.5px;background:#e6e6e6;border:1px solid #f5f5f5;border-radius:2px;"></div>
<svg style="left:809px;top:755.5px;" width="17" height="13" viewBox="0 0 17 13"><rect x="0.5" y="0.5" width="15" height="11" fill="#e1e1e1" stroke="#6a6a6a" stroke-width="1"/><rect x="0.5" y="0.5" width="15" height="3" fill="#6a6a6a"/><path d="M2.5 6 L4.5 7.5 L2.5 9 M5.5 9.5 H8" stroke="#6a6a6a" stroke-width=".8" fill="none"/></svg>
<svg style="left:827px;top:760px;" width="7" height="5" viewBox="0 0 7 5"><path d="M0 0 H6.6 L3.3 4 Z" fill="#4c4c4c"/></svg>
<span id="t82" class="t" style="left:841.00px;top:756.00px;line-height:14px;font-size:11px;color:#8b8b8b;font-style:italic;font-family:'DejaVu Sans Mono', 'Liberation Mono', monospace;transform:scaleX(1.0474);transform-origin:0 50%;letter-spacing:0.285px;">Type a command</span>
<svg style="left:988px;top:759.5px;" width="8" height="5" viewBox="0 0 8 5"><path d="M0 4.6 H7.6 L3.8 0 Z" fill="#555"/></svg>
<div style="left:0px;top:191px;width:212.5px;height:586px;background:#3b4453;"></div>
<div style="left:0px;top:191px;width:212.5px;height:26px;background:#363e4c;"></div>
<svg style="left:6px;top:199px;" width="4" height="11" viewBox="0 0 4 11"><path d="M0.7 0 V11 M3 0 V11" stroke="#8e95a2" stroke-width="1" stroke-dasharray="1.4 1.2"/></svg>
<span id="t83" class="t" style="left:14.50px;top:197.40px;line-height:15px;font-size:12px;color:#dfe2e7;letter-spacing:-0.349px;">PROPERTIES</span>
<div style="left:17.5px;top:229px;width:160px;height:21px;background:#4b5567;"></div>
<span id="t84" class="t" style="left:20.60px;top:233.00px;line-height:15px;font-size:12px;color:#e4e7eb;letter-spacing:-0.004px;">No selection</span>
<div style="left:3px;top:256px;width:4.5px;height:474px;background:#2a303b;"></div>
<div style="left:16px;top:256px;width:183px;height:20.5px;background:#2a303b;"></div>
<span id="t85" class="t" style="left:23.40px;top:259.25px;line-height:15px;font-size:12px;color:#ffffff;font-weight:700;">General</span>
<svg style="left:183px;top:263.75px;" width="9" height="5" viewBox="0 0 9 5"><path d="M0 0 H8.4 L4.2 4.6 Z" fill="#e6e8ec"/></svg>
<div style="left:33px;top:276.40000000000003px;width:166px;height:20.8px;border-top:1px solid #333a47;border-left:1px solid #333a47;border-right:1px solid #333a47;"></div>
<div style="left:105px;top:276.40000000000003px;width:1px;height:20.8px;background:#333a47;"></div>
<span id="t86" class="t" style="left:40.70px;top:279.80px;line-height:15px;font-size:12px;color:#ccd1d9;">Color</span>
<div style="left:33px;top:297.20000000000005px;width:166px;height:20.8px;border-top:1px solid #333a47;border-left:1px solid #333a47;border-right:1px solid #333a47;"></div>
<div style="left:105px;top:297.20000000000005px;width:1px;height:20.8px;background:#333a47;"></div>
<span id="t87" class="t" style="left:40.70px;top:300.60px;line-height:15px;font-size:12px;color:#ccd1d9;">Layer</span>
<div style="left:33px;top:318.00000000000006px;width:166px;height:20.8px;border-top:1px solid #333a47;border-left:1px solid #333a47;border-right:1px solid #333a47;"></div>
<div style="left:105px;top:318.00000000000006px;width:1px;height:20.8px;background:#333a47;"></div>
<span id="t88" class="t" style="left:40.70px;top:321.40px;line-height:15px;font-size:12px;color:#ccd1d9;">Linetype</span>
<div style="left:33px;top:338.80000000000007px;width:166px;height:20.8px;border-top:1px solid #333a47;border-left:1px solid #333a47;border-right:1px solid #333a47;"></div>
<div style="left:105px;top:338.80000000000007px;width:1px;height:20.8px;background:#333a47;"></div>
<span id="t89" class="t" style="left:40.70px;top:342.20px;line-height:15px;font-size:12px;color:#ccd1d9;">Linetype scale</span>
<div style="left:33px;top:359.6px;width:166px;height:20.8px;border-top:1px solid #333a47;border-left:1px solid #333a47;border-right:1px solid #333a47;"></div>
<div style="left:105px;top:359.6px;width:1px;height:20.8px;background:#333a47;"></div>
<span id="t90" class="t" style="left:40.70px;top:363.00px;line-height:15px;font-size:12px;color:#ccd1d9;">Lineweight</span>
<div style="left:33px;top:380.40000000000003px;width:166px;height:20.8px;border-top:1px solid #333a47;border-left:1px solid #333a47;border-right:1px solid #333a47;"></div>
<div style="left:105px;top:380.40000000000003px;width:1px;height:20.8px;background:#333a47;"></div>
<span id="t91" class="t" style="left:40.70px;top:383.80px;line-height:15px;font-size:12px;color:#ccd1d9;">Transparency</span>
<div style="left:33px;top:401.20000000000005px;width:166px;height:20.8px;border-top:1px solid #333a47;border-left:1px solid #333a47;border-right:1px solid #333a47;"></div>
<div style="left:105px;top:401.20000000000005px;width:1px;height:20.8px;background:#333a47;"></div>
<span id="t92" class="t" style="left:40.70px;top:404.60px;line-height:15px;font-size:12px;color:#ccd1d9;">Thickness</span>
<div style="left:33px;top:422px;width:166px;height:1px;background:#333a47;"></div>
<div style="left:16px;top:426px;width:183px;height:20.5px;background:#2a303b;"></div>
<span id="t93" class="t" style="left:23.40px;top:429.25px;line-height:15px;font-size:12px;color:#cdd1d8;font-weight:700;">3D Visualization</span>
<svg style="left:183px;top:433.75px;" width="9" height="5" viewBox="0 0 9 5"><path d="M0 0 H8.4 L4.2 4.6 Z" fill="#e6e8ec"/></svg>
<div style="left:16px;top:451px;width:183px;height:20.5px;background:#2a303b;"></div>
<span id="t94" class="t" style="left:23.40px;top:454.25px;line-height:15px;font-size:12px;color:#ffffff;font-weight:700;">Plot style</span>
<svg style="left:183px;top:458.75px;" width="9" height="5" viewBox="0 0 9 5"><path d="M0 0 H8.4 L4.2 4.6 Z" fill="#e6e8ec"/></svg>
<div style="left:33px;top:471.6px;width:166px;height:20.8px;border-top:1px solid #333a47;border-left:1px solid #333a47;border-right:1px solid #333a47;"></div>
<div style="left:105px;top:471.6px;width:1px;height:20.8px;background:#333a47;"></div>
<span id="t95" class="t" style="left:40.70px;top:475.00px;line-height:15px;font-size:12px;color:#ccd1d9;">Plot style</span>
<div style="left:33px;top:492.3px;width:166px;height:20.8px;border-top:1px solid #333a47;border-left:1px solid #333a47;border-right:1px solid #333a47;"></div>
<div style="left:105px;top:492.3px;width:1px;height:20.8px;background:#333a47;"></div>
<span id="t96" class="t" style="left:40.70px;top:495.70px;line-height:15px;font-size:12px;color:#ccd1d9;">Plot style table</span>
<div style="left:33px;top:513.0px;width:166px;height:20.8px;border-top:1px solid #333a47;border-left:1px solid #333a47;border-right:1px solid #333a47;"></div>
<div style="left:105px;top:513.0px;width:1px;height:20.8px;background:#333a47;"></div>
<span id="t97" class="t" style="left:40.70px;top:516.40px;line-height:15px;font-size:12px;color:#ccd1d9;">Plot table att...</span>
<div style="left:33px;top:533.7px;width:166px;height:20.8px;border-top:1px solid #333a47;border-left:1px solid #333a47;border-right:1px solid #333a47;"></div>
<div style="left:105px;top:533.7px;width:1px;height:20.8px;background:#333a47;"></div>
<span id="t98" class="t" style="left:40.70px;top:537.10px;line-height:15px;font-size:12px;color:#ccd1d9;">Plot table type</span>
<div style="left:33px;top:554.5px;width:166px;height:1px;background:#333a47;"></div>
<div style="left:16px;top:559px;width:183px;height:20.5px;background:#2a303b;"></div>
<span id="t99" class="t" style="left:23.40px;top:562.25px;line-height:15px;font-size:12px;color:#ffffff;font-weight:700;letter-spacing:-0.247px;">View</span>
<svg style="left:183px;top:566.75px;" width="9" height="5" viewBox="0 0 9 5"><path d="M0 0 H8.4 L4.2 4.6 Z" fill="#e6e8ec"/></svg>
<div style="left:33px;top:579.9px;width:166px;height:20.8px;border-top:1px solid #333a47;border-left:1px solid #333a47;border-right:1px solid #333a47;"></div>
<div style="left:105px;top:579.9px;width:1px;height:20.8px;background:#333a47;"></div>
<span id="t100" class="t" style="left:40.70px;top:583.30px;line-height:15px;font-size:12px;color:#ccd1d9;letter-spacing:-0.280px;">Center X</span>
<span id="t101" class="t" style="left:107.60px;top:583.30px;line-height:15px;font-size:12px;color:#8f97a5;transform:scaleX(0.9704);transform-origin:0 50%;letter-spacing:-0.362px;">17.9688</span>
<div style="left:33px;top:600.65px;width:166px;height:20.8px;border-top:1px solid #333a47;border-left:1px solid #333a47;border-right:1px solid #333a47;"></div>
<div style="left:105px;top:600.65px;width:1px;height:20.8px;background:#333a47;"></div>
<span id="t102" class="t" style="left:40.70px;top:604.05px;line-height:15px;font-size:12px;color:#ccd1d9;letter-spacing:-0.334px;">Center Y</span>
<span id="t103" class="t" style="left:107.60px;top:604.05px;line-height:15px;font-size:12px;color:#8f97a5;transform:scaleX(0.9464);transform-origin:0 50%;letter-spacing:-0.367px;">9.9321</span>
<div style="left:33px;top:621.4px;width:166px;height:20.8px;border-top:1px solid #333a47;border-left:1px solid #333a47;border-right:1px solid #333a47;"></div>
<div style="left:105px;top:621.4px;width:1px;height:20.8px;background:#333a47;"></div>
<span id="t104" class="t" style="left:40.70px;top:624.80px;line-height:15px;font-size:12px;color:#ccd1d9;letter-spacing:-0.270px;">Center Z</span>
<span id="t105" class="t" style="left:107.60px;top:624.80px;line-height:15px;font-size:12px;color:#8f97a5;transform:scaleX(0.9444);transform-origin:0 50%;letter-spacing:-0.334px;">0</span>
<div style="left:33px;top:642.15px;width:166px;height:20.8px;border-top:1px solid #333a47;border-left:1px solid #333a47;border-right:1px solid #333a47;"></div>
<div style="left:105px;top:642.15px;width:1px;height:20.8px;background:#333a47;"></div>
<span id="t106" class="t" style="left:40.70px;top:645.55px;line-height:15px;font-size:12px;color:#ccd1d9;letter-spacing:0.542px;">Height</span>
<span id="t107" class="t" style="left:107.60px;top:645.55px;line-height:15px;font-size:12px;color:#8f97a5;transform:scaleX(0.9283);transform-origin:0 50%;letter-spacing:-0.389px;">25.2</span>
<div style="left:33px;top:662.9px;width:166px;height:20.8px;border-top:1px solid #333a47;border-left:1px solid #333a47;border-right:1px solid #333a47;"></div>
<div style="left:105px;top:662.9px;width:1px;height:20.8px;background:#333a47;"></div>
<span id="t108" class="t" style="left:40.70px;top:666.30px;line-height:15px;font-size:12px;color:#ccd1d9;letter-spacing:0.403px;">Width</span>
<span id="t109" class="t" style="left:107.60px;top:666.30px;line-height:15px;font-size:12px;color:#8f97a5;transform:scaleX(0.9464);transform-origin:0 50%;letter-spacing:-0.367px;">57.097</span>
<div style="left:33px;top:683.5px;width:166px;height:1px;background:#333a47;"></div>
<div style="left:16px;top:688px;width:183px;height:20.5px;background:#2a303b;"></div>
<span id="t110" class="t" style="left:23.40px;top:691.25px;line-height:15px;font-size:12px;color:#ffffff;font-weight:700;letter-spacing:-0.429px;">Misc</span>
<svg style="left:183px;top:695.75px;" width="9" height="5" viewBox="0 0 9 5"><path d="M0 0 H8.4 L4.2 4.6 Z" fill="#e6e8ec"/></svg>
<div style="left:33px;top:708.8000000000001px;width:166px;height:20.8px;border-top:1px solid #333a47;border-left:1px solid #333a47;border-right:1px solid #333a47;"></div>
<div style="left:105px;top:708.8000000000001px;width:1px;height:20.8px;background:#333a47;"></div>
<span id="t111" class="t" style="left:40.70px;top:712.20px;line-height:15px;font-size:12px;color:#ccd1d9;letter-spacing:-0.269px;">UCS icon...</span>
<span id="t112" class="t" style="left:107.60px;top:712.20px;line-height:15px;font-size:12px;color:#e4e7eb;transform:scaleX(0.9355);transform-origin:0 50%;letter-spacing:-0.489px;">Yes</span>
<div style="left:33px;top:729.5px;width:166px;height:20.8px;border-top:1px solid #333a47;border-left:1px solid #333a47;border-right:1px solid #333a47;"></div>
<div style="left:105px;top:729.5px;width:1px;height:20.8px;background:#333a47;"></div>
<span id="t113" class="t" style="left:40.70px;top:732.90px;line-height:15px;font-size:12px;color:#ccd1d9;letter-spacing:-0.269px;">UCS icon...</span>
<span id="t114" class="t" style="left:107.60px;top:732.90px;line-height:15px;font-size:12px;color:#e4e7eb;transform:scaleX(0.9355);transform-origin:0 50%;letter-spacing:-0.489px;">Yes</span>
<div style="left:33px;top:750px;width:166px;height:10.6px;overflow:hidden;"><div style="left:0;top:0;width:166px;height:21px;border-top:1px solid #333a47;border-left:1px solid #333a47;border-right:1px solid #333a47;"></div><div style="left:72px;top:0;width:1px;height:21px;background:#333a47"></div><span class="t" style="left:7.7px;top:3px;line-height:15px;font-size:12px;color:#ccd1d9">UCS per v...</span><span class="t" style="left:74.6px;top:3px;line-height:15px;font-size:12px;color:#e4e7eb">Yes</span></div>
<div style="left:0px;top:777px;width:1536px;height:47px;background:#222833;"></div>
<svg style="left:8px;top:777px;" width="62" height="18" viewBox="0 0 62 18"><path d="M0 0 H62 C58 0 57.5 4 56 10 C54.5 16 53 18 49 18 H14 C9.5 18 8 16 6.5 10 C5 4 4 0 0 0 Z" fill="#3b4453"/></svg>
<span id="t115" class="t" style="left:22.50px;top:779.30px;line-height:15px;font-size:12px;color:#ffffff;font-weight:700;letter-spacing:0.032px;">Model</span>
<svg style="left:71px;top:777px;" width="62" height="18" viewBox="0 0 62 18"><path d="M0 0 H62 C58 0 57.5 4 56 10 C54.5 16 53 18 49 18 H13 C8.5 18 7 16 5.5 10 C4 4 4 0 0 0 Z" fill="#2e3542"/></svg>
<span id="t116" class="t" style="left:80.80px;top:779.30px;line-height:15px;font-size:12px;color:#c5cad3;letter-spacing:-0.251px;">Layout1</span>
<svg style="left:135px;top:777px;" width="63" height="18" viewBox="0 0 63 18"><path d="M0 0 H63 C59 0 58.5 4 57 10 C55.5 16 54 18 50 18 H13 C8.5 18 7 16 5.5 10 C4 4 4 0 0 0 Z" fill="#2e3542"/></svg>
<span id="t117" class="t" style="left:145.80px;top:779.30px;line-height:15px;font-size:12px;color:#c5cad3;letter-spacing:-0.251px;">Layout2</span>
<svg style="left:202px;top:779px;" width="25" height="15" viewBox="0 0 25 15"><path d="M7 0 H22 Q25 0 24 3 L21 12 Q20 15 17 15 H3 Q0 15 1 12 L4 3 Q5 0 7 0 Z" fill="#2e3542"/></svg>
<svg style="left:210px;top:782px;" width="9" height="9" viewBox="0 0 9 9"><path d="M4.5 0 V9 M0 4.5 H9" stroke="#d5d8de" stroke-width="1.7"/></svg>
<div style="left:997px;top:799px;width:113px;height:25px;background:#373f4d;"></div>
<div style="left:1112px;top:799px;width:168px;height:25px;background:#373f4d;"></div>
<div style="left:1282px;top:799px;width:105px;height:25px;background:#373f4d;"></div>
<div style="left:1389px;top:799px;width:64.5px;height:25px;background:#373f4d;"></div>
<div style="left:1455px;top:799px;width:24.5px;height:25px;background:#373f4d;"></div>
<div style="left:1487px;top:799px;width:49px;height:25px;background:#373f4d;"></div>
<span id="t118" class="t" style="left:1001.30px;top:803.80px;line-height:15px;font-size:12px;color:#eef0f3;transform:scaleX(0.9543);transform-origin:0 50%;letter-spacing:-0.534px;">MODEL</span>
<div style="left:1047.4px;top:799px;width:22.8px;height:23.5px;background:#5b8ec8;"></div>
<svg style="left:1050.8px;top:802.5px;" width="16" height="16" viewBox="0 0 16 16"><path d="M3 0 V16 M8 0 V16 M13 0 V16 M0 3 H16 M0 8 H16 M0 13 H16" stroke="#f4f6f9" stroke-width="1.4"/></svg>
<svg style="left:1076.5px;top:803.5px;" width="13" height="13" viewBox="0 0 13 13"><rect x="0" y="0" width="2.2" height="2.2" fill="#e9ebef"/><rect x="0" y="5" width="2.2" height="2.2" fill="#e9ebef"/><rect x="0" y="10" width="2.2" height="2.2" fill="#e9ebef"/><rect x="5" y="0" width="2.2" height="2.2" fill="#e9ebef"/><rect x="5" y="5" width="2.2" height="2.2" fill="#e9ebef"/><rect x="5" y="10" width="2.2" height="2.2" fill="#e9ebef"/><rect x="10" y="0" width="2.2" height="2.2" fill="#e9ebef"/><rect x="10" y="5" width="2.2" height="2.2" fill="#e9ebef"/><rect x="10" y="10" width="2.2" height="2.2" fill="#e9ebef"/></svg>
<svg style="left:1099px;top:807.4px;" width="8" height="5" viewBox="0 0 8 5"><path d="M0 0 H7.2 L3.6 4.2 Z" fill="#d8dbe0"/></svg>
<svg style="left:1117px;top:802px;" width="16" height="17" viewBox="0 0 16 17"><path d="M1.5 0 V15 H16" fill="none" stroke="#c3c7cf" stroke-width="1.2"/><path d="M1.5 11 H5.5 V15" fill="none" stroke="#c3c7cf" stroke-width="1"/></svg>
<div style="left:1136.7px;top:799px;width:23.7px;height:23.5px;background:#5b8ec8;"></div>
<svg style="left:1140px;top:803px;" width="18" height="16" viewBox="0 0 18 16"><circle cx="7.5" cy="8.5" r="6.5" fill="none" stroke="#f4f6f9" stroke-width="1.3"/><path d="M7.5 8.5 H17 M7.5 8.5 L13.5 1" stroke="#f4f6f9" stroke-width="1.2"/></svg>
<svg style="left:1164.4px;top:807.4px;" width="8" height="5" viewBox="0 0 8 5"><path d="M0 0 H7.2 L3.6 4.2 Z" fill="#d8dbe0"/></svg>
<svg style="left:1180px;top:802px;" width="16" height="18" viewBox="0 0 16 18"><path d="M8 0.8 V14.4" stroke="#aab0ba" stroke-width="1"/><path d="M2 1.5 L14 13" stroke="#94595c" stroke-width="1.1"/><path d="M13 2.5 L3.5 12" stroke="#6f7f76" stroke-width="1" opacity=".5"/><circle cx="8" cy="7.2" r="1.4" fill="#373f4d" stroke="#c9cdd4" stroke-width=".9"/></svg>
<svg style="left:1203.6px;top:807.4px;" width="8" height="5" viewBox="0 0 8 5"><path d="M0 0 H7.2 L3.6 4.2 Z" fill="#d8dbe0"/></svg>
<div style="left:1216px;top:799px;width:22.8px;height:23.5px;background:#5b8ec8;"></div>
<svg style="left:1219px;top:803px;" width="17" height="16" viewBox="0 0 17 16"><path d="M1 13.5 L15 1" stroke="#f4f6f9" stroke-width="1.3"/><path d="M0 14.8 H16" stroke="#dfe6f0" stroke-width="1.2"/><circle cx="7.5" cy="7.8" r="1.4" fill="#fff"/></svg>
<div style="left:1240.6px;top:799px;width:22.8px;height:23.5px;background:#5b8ec8;"></div>
<svg style="left:1243.5px;top:802px;" width="17" height="17" viewBox="0 0 17 17"><rect x="3.5" y="3.5" width="12.5" height="12.5" fill="none" stroke="#f4f6f9" stroke-width="1.3"/><rect x="0.8" y="0.8" width="5" height="5" fill="#5b8ec8" stroke="#f4f6f9" stroke-width="1.1"/></svg>
<svg style="left:1267.9px;top:807.4px;" width="8" height="5" viewBox="0 0 8 5"><path d="M0 0 H7.2 L3.6 4.2 Z" fill="#d8dbe0"/></svg>
<div style="left:1282.4px;top:799px;width:22.5px;height:23.5px;background:#5b8ec8;"></div>
<svg style="left:1285px;top:802.5px;" width="18" height="17" viewBox="0 0 18 17"><path d="M8 0 L11.3 9 L16 16.4 L8 12.4 L0 16.4 L4.7 9 Z" fill="#ffffff"/><circle cx="14.5" cy="3.5" r="2.2" fill="none" stroke="#e8eef6" stroke-width="1"/></svg>
<svg style="left:1309px;top:802.5px;" width="18" height="17" viewBox="0 0 18 17"><path d="M8 0 L11.3 9 L16 16.4 L8 12.4 L0 16.4 L4.7 9 Z" fill="#d9dce1"/><path d="M14.5 0 L12.5 3.5 H14 L12.8 6.5 L16.5 2.6 H14.8 L16 0 Z" fill="#d9dce1"/></svg>
<svg style="left:1333px;top:802.5px;" width="18" height="17" viewBox="0 0 18 17"><path d="M8 0 L11.3 9 L16 16.4 L8 12.4 L0 16.4 L4.7 9 Z" fill="#d9dce1"/></svg>
<span id="t119" class="t" style="left:1359.00px;top:804.50px;line-height:14px;font-size:11.5px;color:#e4e7eb;transform:scaleX(0.8026);transform-origin:0 50%;letter-spacing:-0.400px;">1:1</span>
<svg style="left:1375px;top:807.4px;" width="8" height="5" viewBox="0 0 8 5"><path d="M0 0 H7.2 L3.6 4.2 Z" fill="#d8dbe0"/></svg>
<svg style="left:1392.5px;top:802px;" width="17" height="18" viewBox="0 0 17 18"><g transform="translate(8.5 9)"><rect x="-1.8" y="-8.6" width="3.6" height="4" fill="#e9ebef" transform="rotate(0)"/><rect x="-1.8" y="-8.6" width="3.6" height="4" fill="#e9ebef" transform="rotate(45)"/><rect x="-1.8" y="-8.6" width="3.6" height="4" fill="#e9ebef" transform="rotate(90)"/><rect x="-1.8" y="-8.6" width="3.6" height="4" fill="#e9ebef" transform="rotate(135)"/><rect x="-1.8" y="-8.6" width="3.6" height="4" fill="#e9ebef" transform="rotate(180)"/><rect x="-1.8" y="-8.6" width="3.6" height="4" fill="#e9ebef" transform="rotate(225)"/><rect x="-1.8" y="-8.6" width="3.6" height="4" fill="#e9ebef" transform="rotate(270)"/><rect x="-1.8" y="-8.6" width="3.6" height="4" fill="#e9ebef" transform="rotate(315)"/><circle r="5.8" fill="#e9ebef"/><circle r="2.4" fill="#373f4d"/></g></svg>
<svg style="left:1416.4px;top:807.4px;" width="8" height="5" viewBox="0 0 8 5"><path d="M0 0 H7.2 L3.6 4.2 Z" fill="#d8dbe0"/></svg>
<svg style="left:1433px;top:803.5px;" width="15" height="15" viewBox="0 0 15 15"><path d="M7.5 0 V15 M0 7.5 H15" stroke="#f0f2f5" stroke-width="2"/></svg>
<svg style="left:1459px;top:801px;" width="17" height="19" viewBox="0 0 17 19"><rect x="0.6" y="0.6" width="5.5" height="5.5" fill="none" stroke="#c9cdd4" stroke-width="1.1"/><circle cx="12.5" cy="7" r="3.3" fill="none" stroke="#c9cdd4" stroke-width="1.1"/><path d="M6.5 12.5 L9.5 18 H3.5 Z" fill="none" stroke="#c9cdd4" stroke-width="1.1"/></svg>
<div style="left:1483px;top:800px;width:1.5px;height:22px;background:#3a4250;"></div>
<svg style="left:1491px;top:803.5px;" width="17" height="14" viewBox="0 0 17 14"><rect x="0.7" y="0.7" width="15.4" height="12" fill="none" stroke="#dfe2e7" stroke-width="1.3"/><path d="M3 10.5 V7.5 L6 10.5 Z M13.5 3 V6 L10.5 3 Z" fill="#dfe2e7"/></svg>
<svg style="left:1514.8px;top:803px;" width="17" height="16" viewBox="0 0 17 16"><path d="M0 2 H16.5 M0 8 H16.5 M0 14 H16.5" stroke="#eef0f3" stroke-width="2.2"/></svg>
<div style="left:51.2px;top:150.5px;width:169.8px;height:433px;background:#323946;border-radius:2px 0 0 4px;box-shadow:0 0 0 1px #2a303b;"></div>
<div style="left:219px;top:157px;width:21.6px;height:98px;background:#2e3441;border-radius:0 5px 5px 0;box-shadow:0 0 0 1px #2a303b;"></div>
<div style="left:219px;top:360px;width:21.6px;height:99px;background:#2e3441;border-radius:0 5px 5px 0;box-shadow:0 0 0 1px #2a303b;"></div>
<div style="left:219px;top:461px;width:21.6px;height:101.8px;background:#2e3441;border-radius:0 5px 5px 0;box-shadow:0 0 0 1px #2a303b;"></div>
<div style="left:219px;top:257px;width:23.6px;height:102px;background:#3b4453;border-radius:0 5px 5px 0;box-shadow:0 0 0 1px #2a303b;"></div>
<div style="left:74.5px;top:155px;width:144.8px;height:426.5px;background:#3b4453;border-radius:4px 4px 3px 4px;box-shadow:0 0 0 1px #2d3440;"></div>
<div style="left:214px;top:258px;width:8px;height:100px;background:#3b4453;"></div>
<svg style="left:60px;top:158px;" width="8" height="8" viewBox="0 0 8 8"><path d="M0.8 0.8 L7.2 7.2 M7.2 0.8 L0.8 7.2" stroke="#eef0f3" stroke-width="2"/></svg>
<svg style="left:59.5px;top:176.5px;" width="9" height="9" viewBox="0 0 9 9"><path d="M0 0.5 L3.8 4.5 L0 8.5 Z M9 0.5 L5.2 4.5 L9 8.5 Z" fill="#d9dce1"/><path d="M4.5 0 V9" stroke="#d9dce1" stroke-width="1.2"/></svg>
<svg style="left:59px;top:195px;" width="10" height="10" viewBox="0 0 10 10"><g transform="translate(5 5)"><rect x="-1.1" y="-5.2" width="2.2" height="2.6" fill="#e3e6ea" transform="rotate(0)"/><rect x="-1.1" y="-5.2" width="2.2" height="2.6" fill="#e3e6ea" transform="rotate(45)"/><rect x="-1.1" y="-5.2" width="2.2" height="2.6" fill="#e3e6ea" transform="rotate(90)"/><rect x="-1.1" y="-5.2" width="2.2" height="2.6" fill="#e3e6ea" transform="rotate(135)"/><rect x="-1.1" y="-5.2" width="2.2" height="2.6" fill="#e3e6ea" transform="rotate(180)"/><rect x="-1.1" y="-5.2" width="2.2" height="2.6" fill="#e3e6ea" transform="rotate(225)"/><rect x="-1.1" y="-5.2" width="2.2" height="2.6" fill="#e3e6ea" transform="rotate(270)"/><rect x="-1.1" y="-5.2" width="2.2" height="2.6" fill="#e3e6ea" transform="rotate(315)"/><circle r="3.4" fill="#e3e6ea"/><circle r="1.4" fill="#323946"/></g></svg>
<span class="t" style="left:55.50px;top:557.00px;line-height:15px;font-size:12px;color:#d5d9e0;transform:rotate(-90deg) scaleX(0.9304);transform-origin:0 0;letter-spacing:-0.288px;">BLOCK AUTHORING PALETTES - ALL PALETTES</span>
<svg style="left:57.3px;top:568.5px;" width="12" height="12" viewBox="0 0 12 12"><rect x="0.6" y="0.6" width="9.5" height="10.5" fill="none" stroke="#dfe2e7" stroke-width="1.1"/><path d="M2.5 3.5 H8 M2.5 6 H8 M2.5 8.5 H8 M4.5 2.5 V10 M6.8 2.5 V10" stroke="#dfe2e7" stroke-width=".8"/><path d="M10 2.5 H11.5 V6" stroke="#dfe2e7" stroke-width="1" fill="none"/></svg>
<span class="t" style="left:223.70px;top:234.50px;line-height:15px;font-size:12px;color:#c3c8d1;transform:rotate(-90deg) scaleX(1.0000);transform-origin:0 0;letter-spacing:-0.448px;">Parameters</span>
<span class="t" style="left:223.70px;top:326.60px;line-height:15px;font-size:12px;color:#ffffff;transform:rotate(-90deg) scaleX(1.0000);transform-origin:0 0;letter-spacing:-0.110px;">Actions</span>
<span class="t" style="left:223.70px;top:448.20px;line-height:15px;font-size:12px;color:#c3c8d1;transform:rotate(-90deg) scaleX(1.0000);transform-origin:0 0;letter-spacing:-0.398px;">Parameter Sets</span>
<span class="t" style="left:223.70px;top:542.40px;line-height:15px;font-size:12px;color:#c3c8d1;transform:rotate(-90deg) scaleX(1.0000);transform-origin:0 0;letter-spacing:-0.060px;">Constraints</span>
<svg style="left:93.35px;top:167.1px;" width="26.8" height="26.8" viewBox="0 0 26.8 26.8"><path d="M13.4 1 V25.8 M1 13.4 H25.8" stroke="#f6f6f6" stroke-width="1.8"/><path d="M13.4 0 L10.100000000000001 4.6 H16.7 Z M13.4 26.8 L10.100000000000001 22.200000000000003 H16.7 Z M0 13.4 L4.6 10.100000000000001 V16.7 Z M26.8 13.4 L22.200000000000003 10.100000000000001 V16.7 Z" fill="#f6f6f6"/></svg>
<svg style="left:109.0px;top:162.6px;" width="16" height="16" viewBox="0 0 15 15"><path d="M11.2 0 L0 7.3 L6.2 9 L4.2 15 L15 8 L9.2 6.2 Z" fill="#f7cf58"/><path d="M9.6 3 L4 7.3 L8 8.3 L6.6 11.6 L11.6 8 L7.8 6.8 Z" fill="#fbe28f"/></svg>
<span id="t120" class="t" style="left:129.50px;top:172.70px;line-height:15px;font-size:12px;color:#e9ebee;letter-spacing:-0.015px;">Move</span>
<svg style="left:92.5px;top:208px;" width="29" height="28" viewBox="0 0 29 28"><path d="M0.5 0.5 H28 V27.5" fill="none" stroke="#5f9bd6" stroke-width="1"/><path d="M0.5 0.5 V27.5 H28" fill="none" stroke="#c9cdd4" stroke-width="1"/><path d="M0.5 12.5 H15.5 V27.5" fill="none" stroke="#c9cdd4" stroke-width="1"/></svg>
<svg style="left:109.0px;top:203.9px;" width="16" height="16" viewBox="0 0 15 15"><path d="M11.2 0 L0 7.3 L6.2 9 L4.2 15 L15 8 L9.2 6.2 Z" fill="#f7cf58"/><path d="M9.6 3 L4 7.3 L8 8.3 L6.6 11.6 L11.6 8 L7.8 6.8 Z" fill="#fbe28f"/></svg>
<span id="t121" class="t" style="left:129.50px;top:214.00px;line-height:15px;font-size:12px;color:#e9ebee;transform:scaleX(0.9289);transform-origin:0 50%;letter-spacing:-0.375px;">Scale</span>
<svg style="left:92.5px;top:249px;" width="33" height="28" viewBox="0 0 33 28"><rect x="0.5" y="0.5" width="15" height="27" fill="none" stroke="#c9cdd4" stroke-width="1"/><path d="M15.5 27.5 H32.5 L25 8" fill="none" stroke="#5f9bd6" stroke-width="1"/><path d="M9.5 20.5 H19" stroke="#c9cdd4" stroke-width="1"/><path d="M18 18 L22 20.5 L18 23 Z" fill="#f2f2f2"/></svg>
<svg style="left:109.0px;top:245.6px;" width="16" height="16" viewBox="0 0 15 15"><path d="M11.2 0 L0 7.3 L6.2 9 L4.2 15 L15 8 L9.2 6.2 Z" fill="#f7cf58"/><path d="M9.6 3 L4 7.3 L8 8.3 L6.6 11.6 L11.6 8 L7.8 6.8 Z" fill="#fbe28f"/></svg>
<span id="t122" class="t" style="left:129.50px;top:255.00px;line-height:15px;font-size:12px;color:#e9ebee;letter-spacing:-0.336px;">Stretch</span>
<svg style="left:92.5px;top:287.5px;" width="30" height="31" viewBox="0 0 30 31"><rect x="0.5" y="0.5" width="11" height="25" fill="none" stroke="#5f9bd6" stroke-width="1"/><rect x="7" y="19" width="22" height="11.5" fill="#3b4453" stroke="#c9cdd4" stroke-width="1" stroke-dasharray="1.6 1.2"/><path d="M15 10.5 H25 V19" fill="none" stroke="#c9cdd4" stroke-width="1"/><path d="M16.5 8 L12.5 10.5 L16.5 13 Z" fill="#f2f2f2"/></svg>
<svg style="left:109.0px;top:285.6px;" width="16" height="16" viewBox="0 0 15 15"><path d="M11.2 0 L0 7.3 L6.2 9 L4.2 15 L15 8 L9.2 6.2 Z" fill="#f7cf58"/><path d="M9.6 3 L4 7.3 L8 8.3 L6.6 11.6 L11.6 8 L7.8 6.8 Z" fill="#fbe28f"/></svg>
<span id="t123" class="t" style="left:129.50px;top:295.50px;line-height:15px;font-size:12px;color:#e9ebee;letter-spacing:-0.223px;">Polar Stretch</span>
<svg style="left:92.5px;top:329px;" width="29" height="29" viewBox="0 0 29 29"><path d="M14.2 0.8 A13.4 13.4 0 1 0 27.6 14.2" fill="none" stroke="#dfe2e7" stroke-width="1.2"/><path d="M14 -2 L19 1 L14 4 Z" fill="#f2f2f2"/></svg>
<svg style="left:109.0px;top:327.6px;" width="16" height="16" viewBox="0 0 15 15"><path d="M11.2 0 L0 7.3 L6.2 9 L4.2 15 L15 8 L9.2 6.2 Z" fill="#f7cf58"/><path d="M9.6 3 L4 7.3 L8 8.3 L6.6 11.6 L11.6 8 L7.8 6.8 Z" fill="#fbe28f"/></svg>
<span id="t124" class="t" style="left:129.50px;top:336.10px;line-height:15px;font-size:12px;color:#e9ebee;letter-spacing:-0.252px;">Rotate</span>
<svg style="left:92.5px;top:369px;" width="32" height="30" viewBox="0 0 32 30"><path d="M15 0.5 L0.5 29.5 H15 Z" fill="none" stroke="#c9cdd4" stroke-width="1"/><path d="M16.5 0.5 L31 29.5 H16.5 Z" fill="none" stroke="#5f9bd6" stroke-width="1"/></svg>
<svg style="left:109.0px;top:367.40000000000003px;" width="16" height="16" viewBox="0 0 15 15"><path d="M11.2 0 L0 7.3 L6.2 9 L4.2 15 L15 8 L9.2 6.2 Z" fill="#f7cf58"/><path d="M9.6 3 L4 7.3 L8 8.3 L6.6 11.6 L11.6 8 L7.8 6.8 Z" fill="#fbe28f"/></svg>
<span id="t125" class="t" style="left:129.40px;top:377.00px;line-height:15px;font-size:12px;color:#e9ebee;letter-spacing:-0.415px;">Flip</span>
<svg style="left:93px;top:412px;" width="30" height="28" viewBox="0 0 30 28"><rect x="0" y="0" width="12.6" height="11.7" fill="#dcdcdc"/><rect x="16.3" y="0" width="12.3" height="11.7" fill="#7fc3f7"/><rect x="0" y="15.8" width="12.6" height="12.2" fill="#7fc3f7"/><rect x="16.3" y="15.8" width="12.3" height="12.2" fill="#7fc3f7"/></svg>
<svg style="left:109.0px;top:407.90000000000003px;" width="16" height="16" viewBox="0 0 15 15"><path d="M11.2 0 L0 7.3 L6.2 9 L4.2 15 L15 8 L9.2 6.2 Z" fill="#f7cf58"/><path d="M9.6 3 L4 7.3 L8 8.3 L6.6 11.6 L11.6 8 L7.8 6.8 Z" fill="#fbe28f"/></svg>
<span id="t126" class="t" style="left:129.40px;top:417.50px;line-height:15px;font-size:12px;color:#e9ebee;letter-spacing:-0.318px;">Array</span>
<svg style="left:92.9px;top:453.2px;" width="25" height="28" viewBox="0 0 25 28"><rect x="0" y="0" width="24.1" height="27.7" fill="#f2f2f2"/><rect x="0" y="0" width="24.1" height="2.2" fill="#c9ccd6"/><path d="M3.2 7 H6.5 M3.2 11.3 H6.5 M3.2 15.2 H6.5 M3.2 19.1 H6.5 M3.2 23.3 H6.5" stroke="#4a4a4a" stroke-width="1"/><path d="M8 7 H17 M8 11.3 H16 M8 15.2 H20 M8 19.1 H15 M8 23.3 H20" stroke="#5c5c5c" stroke-width="1"/></svg>
<svg style="left:109.0px;top:448.90000000000003px;" width="16" height="16" viewBox="0 0 15 15"><path d="M11.2 0 L0 7.3 L6.2 9 L4.2 15 L15 8 L9.2 6.2 Z" fill="#f7cf58"/><path d="M9.6 3 L4 7.3 L8 8.3 L6.6 11.6 L11.6 8 L7.8 6.8 Z" fill="#fbe28f"/></svg>
<span id="t127" class="t" style="left:129.40px;top:458.00px;line-height:15px;font-size:12px;color:#e9ebee;letter-spacing:-0.055px;">Lookup</span>
<svg style="left:94.2px;top:491px;" width="28" height="28" viewBox="0 0 28 28"><rect x="0" y="0" width="27.7" height="27.8" rx="1" fill="#f4f4f6"/><rect x="0" y="0" width="27.7" height="3.6" fill="#727783"/><path d="M0 9.5 H27.7 M0 15.5 H27.7 M0 21.5 H27.7 M7 3.6 V27.8 M14 3.6 V27.8 M21 3.6 V27.8" stroke="#c3c7d4" stroke-width="1.2"/></svg>
<span id="t128" class="t" style="left:129.40px;top:491.50px;line-height:15px;font-size:12px;color:#e9ebee;letter-spacing:-0.011px;">Block</span>
<span id="t129" class="t" style="left:129.40px;top:507.40px;line-height:15px;font-size:12px;color:#e9ebee;letter-spacing:-0.352px;">Properties  Ta...</span>
<div style="left:214.8px;top:256.4px;width:31.6px;height:102.4px;border:4.2px solid #e0252c;"></div>
<div style="left:74.4px;top:401.5px;width:147.4px;height:46.7px;border:4.5px solid #e0252c;"></div>
</div></body></html>
